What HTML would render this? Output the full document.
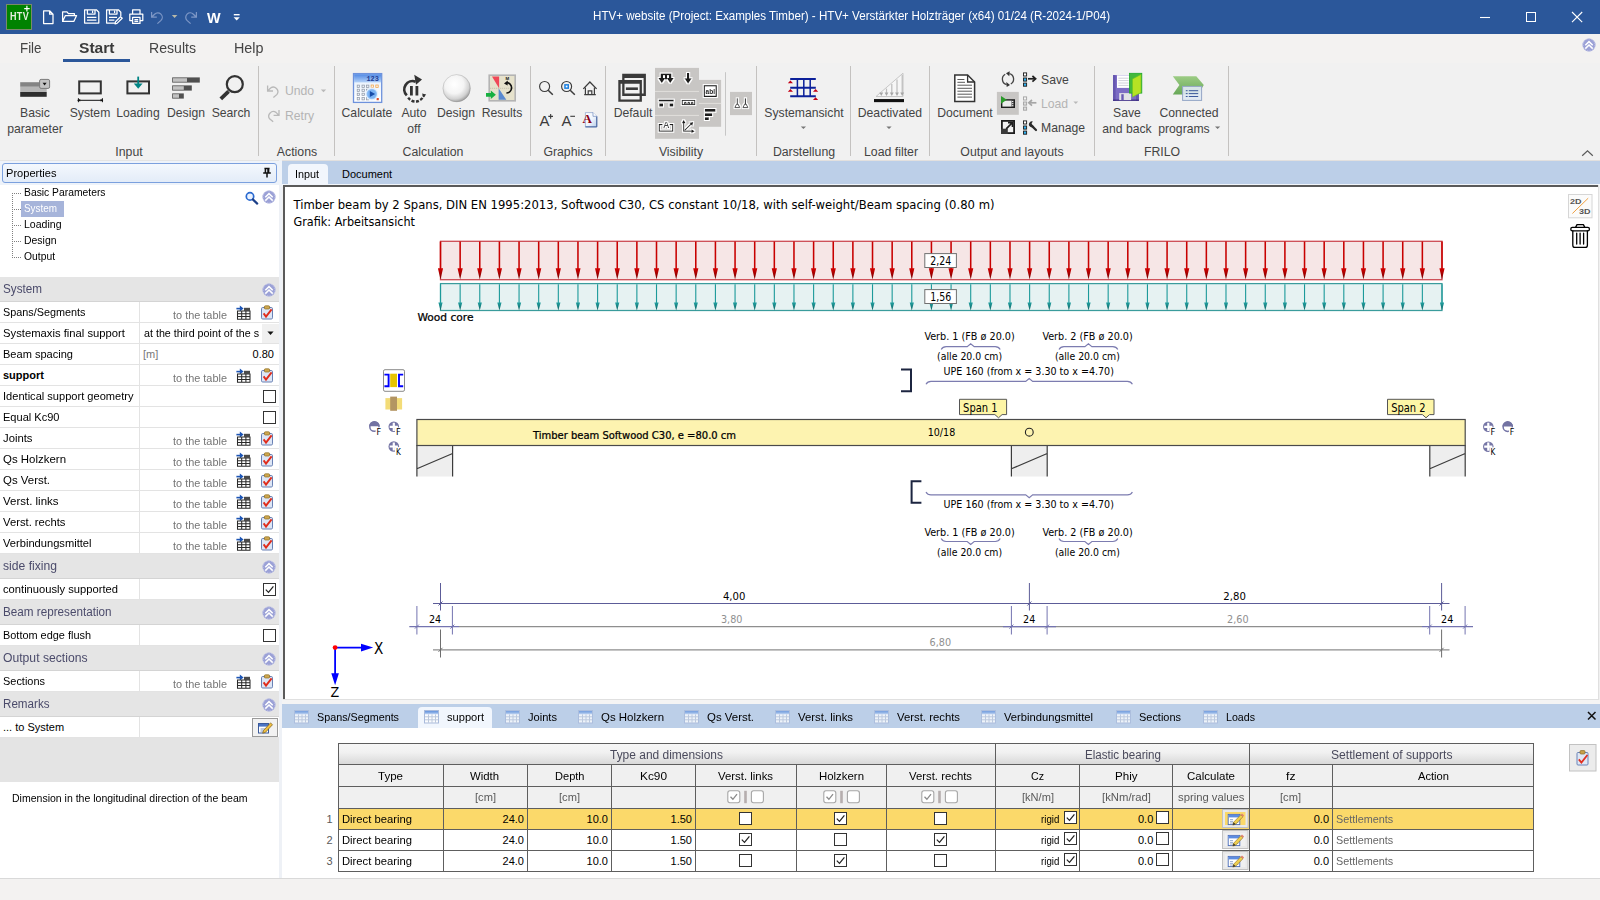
<!DOCTYPE html><html><head><meta charset="utf-8"><title>HTV+</title><style>
*{box-sizing:border-box;margin:0;padding:0}
html,body{width:1600px;height:900px;overflow:hidden;background:#f0f0f0}
body{font-family:"Liberation Sans",sans-serif;font-size:12px;color:#000;position:relative}
.abs{position:absolute}
.t{position:absolute;white-space:nowrap;line-height:1}
svg{position:absolute;overflow:visible}
#title{left:0;top:0;width:1600px;height:33.5px;background:#2b579a}
#menu{left:0;top:33.5px;width:1600px;height:29.5px;background:#f3f2f1}
#ribbon{left:0;top:63px;width:1600px;height:98px;background:#f1f1f1}
.sep{position:absolute;top:66px;width:1px;height:89.8px;background:#c4c2c0}
#left{left:0;top:160px;width:279px;height:718px;background:#e4e4e4}
.hdr{position:absolute;left:0;width:279px;height:25px;background:#e5e5e5;border-bottom:1px solid #d4d4d4}
.row{position:absolute;left:0;width:279px;height:21px;background:#fff;border-bottom:1px solid #e3e3e3}
.row i{position:absolute;left:139px;top:0;width:1px;height:20px;background:#e3e3e3}
.cb{position:absolute;width:13px;height:13px;border:1px solid #333;background:#fff}
</style></head><body>
<div id="title" class="abs"></div>
<div class="abs" style="left:6px;top:4px;width:26px;height:26px;background:#008200;border:1px solid #7a8a6a"></div>
<div class="t" style="left:9.6px;top:11.2px;font-size:10.5px;font-weight:bold;color:#e8f0e0;transform:scaleX(.86);transform-origin:0 0;letter-spacing:.4px">HTV</div>
<svg width="10" height="10" viewBox="0 0 10 10" style="left:22px;top:4px;"><path d="M4.9 1.8V7.4M2.2 4.6H7.7" stroke="#fff" stroke-width="1.2"/></svg>
<svg width="16" height="18" viewBox="0 0 16 18" style="left:40px;top:8px;"><path d="M3.6 2.8H9.6L13 6.2V15.6H3.6Z M9.6 2.8V6.2H13" stroke="#fff" stroke-width="1.25" fill="none" stroke-linejoin="round"/></svg>
<svg width="20" height="18" viewBox="0 0 20 18" style="left:60px;top:8px;"><path d="M2.6 13.4V3.8H7L8.4 5.6H14.4V7.6 M2.6 13.4L5.4 7.6H16.6L13.8 13.4Z" stroke="#fff" stroke-width="1.25" fill="none" stroke-linejoin="round"/></svg>
<svg width="20" height="18" viewBox="0 0 20 18" style="left:82px;top:7px;"><path d="M2.6 2.8H14.4L16.8 5.2V16H2.6Z M5.4 2.8V7H13V2.8 M10.6 3.8V6 M5 10.4H14.4 M5 13.2H14.4" stroke="#fff" stroke-width="1.25" fill="none" stroke-linejoin="round"/></svg>
<svg width="20" height="18" viewBox="0 0 20 18" style="left:104px;top:7px;"><path d="M11 16H2.6V2.8H14.4L16.8 5.2V9 M5.4 2.8V7H13V2.8 M10.6 3.8V6 M5 10.4H13 M5 13.2H10.4" stroke="#fff" stroke-width="1.25" fill="none" stroke-linejoin="round"/><path d="M16.6 9.6L18.2 11.2L13 16.4L11 16.9L11.5 14.8Z" stroke="#fff" stroke-width="1.25" fill="none" stroke-linejoin="round"/></svg>
<svg width="20" height="18" viewBox="0 0 20 18" style="left:127px;top:7px;"><path d="M5.6 7V2.8H13V7 M5.6 13.6H2.8V7H15.8V13.6H13 M5.6 10.4H13V16.4H5.6Z M7.4 12.6H11.2 M7.4 14.4H11.2" stroke="#fff" stroke-width="1.25" fill="none" stroke-linejoin="round"/></svg>
<svg width="18" height="16" viewBox="0 0 18 16" style="left:149px;top:9px;"><path d="M2.6 3V8.2H7.8 M2.8 8L5.6 5.2A4.4 4.4 0 0 1 12 11.4L8.4 14.6" stroke="#7d97c6" stroke-width="1.25" fill="none"/></svg>
<svg width="8" height="5" viewBox="0 0 8 5" style="left:171px;top:14px;"><path d="M0.8 1H6.4L3.6 4Z" fill="#b9b9a8"/></svg>
<svg width="18" height="16" viewBox="0 0 18 16" style="left:181px;top:9px;"><path d="M15.4 3V8.2H10.2 M15.2 8L12.4 5.2A4.4 4.4 0 0 0 6 11.4L9.6 14.6" stroke="#7d97c6" stroke-width="1.25" fill="none"/></svg>
<div class="t" style="left:206.8px;top:9.6px;font-size:15.5px;font-weight:bold;color:#fff;transform:scaleX(.93);transform-origin:0 0">W</div>
<svg width="10" height="9" viewBox="0 0 10 9" style="left:232px;top:13px;"><path d="M1.8 1.7H7.6" stroke="#fff" stroke-width="1.4"/><path d="M1.6 4.2H7.8L4.7 7.4Z" fill="#fff"/></svg>
<svg width="14" height="14" viewBox="0 0 14 14" style="left:1478px;top:10px;"><path d="M2 7.5H12" stroke="#fff" stroke-width="1.1"/></svg>
<svg width="14" height="14" viewBox="0 0 14 14" style="left:1524px;top:10px;"><rect x="2.5" y="2.5" width="9" height="9" stroke="#fff" stroke-width="1" fill="none"/></svg>
<svg width="14" height="14" viewBox="0 0 14 14" style="left:1570px;top:10px;"><path d="M2 2L12.2 12.2M12.2 2L2 12.2" stroke="#fff" stroke-width="1.1"/></svg>
<div class="t " style="left:593.00px;top:10.34px;font-size:12px;color:#fff;transform:scaleX(0.9666);transform-origin:0 0;">HTV+ website (Project: Examples Timber) - HTV+ Verstärkter Holzträger (x64) 01/24 (R-2024-1/P04)</div>
<div id="menu" class="abs"></div>
<div class="t " style="left:20.00px;top:40.95px;font-size:14px;color:#444;transform:scaleX(0.9531);transform-origin:0 0;">File</div>
<div class="t " style="left:79.00px;top:40.95px;font-size:14px;color:#3a3a3a;font-weight:bold;transform:scaleX(1.1130);transform-origin:0 0;">Start</div>
<div class="t " style="left:149.00px;top:40.95px;font-size:14px;color:#444;transform:scaleX(1.0068);transform-origin:0 0;">Results</div>
<div class="t " style="left:234.00px;top:40.95px;font-size:14px;color:#444;transform:scaleX(1.0245);transform-origin:0 0;">Help</div>
<div class="abs" style="left:63px;top:59px;width:67px;height:3px;background:#2b579a"></div>
<div id="ribbon" class="abs"></div>
<div class="sep" style="left:258px"></div>
<div class="sep" style="left:334px"></div>
<div class="sep" style="left:530px"></div>
<div class="sep" style="left:605px"></div>
<div class="sep" style="left:756px"></div>
<div class="sep" style="left:850px"></div>
<div class="sep" style="left:929px"></div>
<div class="sep" style="left:1094px"></div>
<div class="sep" style="left:1228px"></div>
<div class="t " style="left:115.32px;top:145.89px;font-size:12.3px;color:#444;">Input</div>
<div class="t " style="left:276.83px;top:145.89px;font-size:12.3px;color:#444;">Actions</div>
<div class="t " style="left:402.57px;top:145.89px;font-size:12.3px;color:#444;">Calculation</div>
<div class="t " style="left:543.39px;top:145.89px;font-size:12.3px;color:#444;">Graphics</div>
<div class="t " style="left:658.90px;top:145.89px;font-size:12.3px;color:#444;">Visibility</div>
<div class="t " style="left:772.89px;top:145.89px;font-size:12.3px;color:#444;">Darstellung</div>
<div class="t " style="left:863.99px;top:145.89px;font-size:12.3px;color:#444;">Load filter</div>
<div class="t " style="left:960.37px;top:145.89px;font-size:12.3px;color:#444;">Output and layouts</div>
<div class="t " style="left:1143.89px;top:145.89px;font-size:12.3px;color:#444;">FRILO</div>
<div class="t " style="left:20.08px;top:107.07px;font-size:12.2px;color:#444;">Basic</div>
<div class="t " style="left:69.66px;top:107.07px;font-size:12.2px;color:#444;">System</div>
<div class="t " style="left:116.29px;top:107.07px;font-size:12.2px;color:#444;">Loading</div>
<div class="t " style="left:167.01px;top:107.07px;font-size:12.2px;color:#444;">Design</div>
<div class="t " style="left:211.67px;top:107.07px;font-size:12.2px;color:#444;">Search</div>
<div class="t " style="left:341.57px;top:107.07px;font-size:12.2px;color:#444;">Calculate</div>
<div class="t " style="left:401.45px;top:107.07px;font-size:12.2px;color:#444;">Auto</div>
<div class="t " style="left:437.01px;top:107.07px;font-size:12.2px;color:#444;">Design</div>
<div class="t " style="left:481.66px;top:107.07px;font-size:12.2px;color:#444;">Results</div>
<div class="t " style="left:613.67px;top:107.07px;font-size:12.2px;color:#444;">Default</div>
<div class="t " style="left:764.33px;top:107.07px;font-size:12.2px;color:#444;">Systemansicht</div>
<div class="t " style="left:857.79px;top:107.07px;font-size:12.2px;color:#444;">Deactivated</div>
<div class="t " style="left:937.20px;top:107.07px;font-size:12.2px;color:#444;">Document</div>
<div class="t " style="left:1113.10px;top:107.07px;font-size:12.2px;color:#444;">Save</div>
<div class="t " style="left:1159.49px;top:107.07px;font-size:12.2px;color:#444;">Connected</div>
<div class="t " style="left:7.20px;top:123.07px;font-size:12.2px;color:#444;">parameter</div>
<div class="t " style="left:407.33px;top:123.07px;font-size:12.2px;color:#444;">off</div>
<div class="t " style="left:1102.24px;top:123.07px;font-size:12.2px;color:#444;">and back</div>
<div class="t " style="left:1158.24px;top:123.07px;font-size:12.2px;color:#444;">programs</div>
<div class="t " style="left:285.00px;top:85.47px;font-size:12.2px;color:#b4b4b4;">Undo</div>
<div class="t " style="left:285.00px;top:110.07px;font-size:12.2px;color:#b4b4b4;">Retry</div>
<div class="t " style="left:1041.00px;top:74.07px;font-size:12.2px;color:#444;">Save</div>
<div class="t " style="left:1041.00px;top:98.07px;font-size:12.2px;color:#b4b4b4;">Load</div>
<div class="t " style="left:1041.00px;top:122.17px;font-size:12.2px;color:#444;">Manage</div>
<svg width="1600" height="170" viewBox="0 0 1600 170" style="left:0;top:0">
<defs><radialGradient id="ball" cx="0.42" cy="0.36" r="0.68"><stop offset="0" stop-color="#ffffff"/><stop offset="0.5" stop-color="#f4f4f4"/><stop offset="0.78" stop-color="#d2d2d2"/><stop offset="1" stop-color="#8e8e8e"/></radialGradient><linearGradient id="calh" x1="0" y1="0" x2="0" y2="1"><stop offset="0" stop-color="#5088e4"/><stop offset="1" stop-color="#b4d2f8"/></linearGradient><linearGradient id="calb" x1="0" y1="0" x2="0" y2="1"><stop offset="0" stop-color="#e4effc"/><stop offset="1" stop-color="#ffffff"/></linearGradient><radialGradient id="play" cx="0.4" cy="0.35" r="0.7"><stop offset="0" stop-color="#7fb6f8"/><stop offset="1" stop-color="#1c5fc8"/></radialGradient><linearGradient id="flop" x1="0" y1="0" x2="1" y2="1"><stop offset="0" stop-color="#7a5ad0"/><stop offset="1" stop-color="#4a3aa0"/></linearGradient><linearGradient id="door" x1="0" y1="0" x2="1" y2="0"><stop offset="0" stop-color="#b8e020"/><stop offset="1" stop-color="#30b030"/></linearGradient><linearGradient id="gban" x1="0" y1="0" x2="0" y2="1"><stop offset="0" stop-color="#9ccc84"/><stop offset="1" stop-color="#68a858"/></linearGradient></defs>
<rect x="20.2" y="82.2" width="19.5" height="4.6" fill="#848484"/><rect x="20.2" y="86.8" width="26.5" height="5.2" fill="#b6b6b6"/><rect x="20.2" y="92" width="26.5" height="4.8" fill="#2e2e2e"/>
<rect x="39.6" y="79.4" width="10" height="9" rx="1.5" fill="#c4c4c4" stroke="#7a7a7a" stroke-width="1"/><path d="M42.6 82.8H46.6L44.6 85.4Z" fill="#111"/>
<rect x="79.2" y="81.4" width="21.6" height="12" fill="none" stroke="#333" stroke-width="2"/><path d="M77.6 100.3H103M78.4 98.2V102.2M102.4 98.2V102.2" stroke="#111" stroke-width="1"/><path d="M77.4 100.3L80.2 99V101.6ZM103.4 100.3L100.6 99V101.6Z" fill="#111"/>
<rect x="127.4" y="81.4" width="21.6" height="12" fill="none" stroke="#333" stroke-width="2"/><path d="M138.2 76.6V86" stroke="#008484" stroke-width="1.8"/><path d="M133.8 83.6H142.6L138.2 88.8Z" fill="#008484"/>
<rect x="172.2" y="77.4" width="27.6" height="5.2" fill="#505050"/><rect x="173" y="78.2" width="14" height="3.6" fill="#c2c2c2"/><rect x="172.2" y="85.4" width="19.6" height="5.2" fill="#505050"/><rect x="173" y="86.2" width="10.8" height="3.6" fill="#c2c2c2"/><rect x="172.2" y="93.4" width="11.6" height="5.2" fill="#505050"/><rect x="173" y="94.2" width="6" height="3.6" fill="#c2c2c2"/>
<circle cx="234.8" cy="84.2" r="8" fill="none" stroke="#333" stroke-width="2.2"/><path d="M228.6 91.4L220.8 98.8" stroke="#333" stroke-width="3.8"/>
<path d="M267.6 85.6V91H273 M267.8 90.8L270.6 88A4.6 4.6 0 0 1 277 94.4L273.4 97.4" fill="none" stroke="#b9b9b9" stroke-width="1.3"/>
<path d="M279 110V115.4H273.6 M278.8 115.2L276 112.4A4.6 4.6 0 0 0 269.6 118.8L273.2 121.8" fill="none" stroke="#b9b9b9" stroke-width="1.3"/>
<path d="M320.8 89.6H326.2L323.5 92.2Z" fill="#b9b9b9"/>
<rect x="353.5" y="73.6" width="28.2" height="28.8" fill="url(#calb)" stroke="#6e92dc" stroke-width="1.3"/><rect x="354.1" y="74.2" width="27" height="8.2" fill="url(#calh)"/>
<text x="366.4" y="81" font-size="6.6" font-weight="bold" fill="#1c3a90" font-family="Liberation Mono,monospace" textLength="12.4" lengthAdjust="spacingAndGlyphs">123</text>
<rect x="357.2" y="85.1" width="2.4" height="2.4" fill="#eceff4" stroke="#8c96a6" stroke-width="0.7"/><rect x="362.0" y="85.1" width="2.4" height="2.4" fill="#eceff4" stroke="#8c96a6" stroke-width="0.7"/><rect x="366.5" y="85.1" width="2.4" height="2.4" fill="#eceff4" stroke="#8c96a6" stroke-width="0.7"/><rect x="357.2" y="89.2" width="2.4" height="2.4" fill="#eceff4" stroke="#8c96a6" stroke-width="0.7"/><rect x="362.0" y="89.2" width="2.4" height="2.4" fill="#eceff4" stroke="#8c96a6" stroke-width="0.7"/><rect x="366.5" y="89.2" width="2.4" height="2.4" fill="#eceff4" stroke="#8c96a6" stroke-width="0.7"/><rect x="357.2" y="93.2" width="2.4" height="2.4" fill="#eceff4" stroke="#8c96a6" stroke-width="0.7"/><rect x="362.0" y="93.2" width="2.4" height="2.4" fill="#eceff4" stroke="#8c96a6" stroke-width="0.7"/><rect x="366.5" y="93.2" width="2.4" height="2.4" fill="#eceff4" stroke="#8c96a6" stroke-width="0.7"/><rect x="357.2" y="97.5" width="2.4" height="2.4" fill="#eceff4" stroke="#8c96a6" stroke-width="0.7"/><rect x="362.0" y="97.5" width="2.4" height="2.4" fill="#eceff4" stroke="#8c96a6" stroke-width="0.7"/><rect x="366.5" y="97.5" width="2.4" height="2.4" fill="#eceff4" stroke="#8c96a6" stroke-width="0.7"/><rect x="371.1" y="85" width="2.4" height="2.4" fill="#fdf0e0" stroke="#f0a040" stroke-width="0.7"/><rect x="375.8" y="85" width="2.4" height="2.4" fill="#fdf0e0" stroke="#f0a040" stroke-width="0.7"/><rect x="376.6" y="98" width="2.2" height="2.2" fill="#e05030"/>
<circle cx="371.8" cy="94" r="5.9" fill="#a4ccf8" stroke="#e6f2ff" stroke-width="1.1"/><circle cx="371.8" cy="94" r="4.6" fill="#7db4f4"/><path d="M369.8 91L375.2 94L369.8 97Z" fill="#184ca8"/>
<path d="M406.8 95.4A8.3 8.3 0 0 1 415.6 81.7" fill="none" stroke="#333" stroke-width="2.7"/><path d="M414.2 74.7L422 79.4L416 84.8Z" fill="#333"/>
<path d="M411.4 86V95.5M416.9 86V95.5" stroke="#333" stroke-width="2.8"/>
<path d="M408.2 97.6A8.6 8.6 0 0 0 423.6 95.6" fill="none" stroke="#333" stroke-width="2.4" stroke-dasharray="3 1.5"/><path d="M422 93.6L426.2 94.6L423.6 97.6Z" fill="#333"/>
<circle cx="456.6" cy="88.2" r="13.9" fill="url(#ball)"/><circle cx="456.6" cy="88.2" r="13.6" fill="none" stroke="#8a8a8a" stroke-opacity="0.45" stroke-width="0.7"/>
<rect x="489.2" y="75.2" width="26" height="25.6" fill="#e6e2cc" stroke="#b4b4b4" stroke-width="1.6"/>
<path d="M492 76.5H499.1V88.3Z" fill="#f04858"/><path d="M498.6 88.3L506.3 99.8H498.6Z" fill="#5a8ad0"/><path d="M490.2 88.3H514.4" stroke="#b0ac98" stroke-width="0.7" stroke-dasharray="1 1"/>
<path d="M506.4 82.6A5.2 5.2 0 0 1 506.4 93" fill="none" stroke="#111" stroke-width="1.6"/><path d="M504 83.6L507.8 80.6L507.6 85.4Z" fill="#111"/>
<text x="505.4" y="80" font-size="4.4" font-weight="bold" fill="#111" font-family="Liberation Sans,sans-serif">M</text>
<path d="M486 92.9H490.8V90.6L495.9 94.8L490.8 99V96.7H486Z" fill="#18b040"/>
<circle cx="544.6" cy="86.5" r="5" fill="none" stroke="#3c3c3c" stroke-width="1.15"/><path d="M548.2 90.2L552.8 94.8" stroke="#3c3c3c" stroke-width="1.5"/>
<circle cx="566.6" cy="86.5" r="5" fill="none" stroke="#3c3c3c" stroke-width="1.15"/><path d="M570.2 90.2L574.8 94.8" stroke="#3c3c3c" stroke-width="1.5"/><rect x="564.2" y="84.1" width="4.8" height="4.8" fill="#1c80e0"/><rect x="565.7" y="85.6" width="1.8" height="1.8" fill="#fff"/>
<path d="M583.3 88.9L589.9 82L596.6 88.9" fill="none" stroke="#3c3c3c" stroke-width="1.3"/><path d="M585.4 87.4V94.6M594.4 87.4V94.6M588.2 94.6V90.8H591.8V94.6M584.2 94.6H595.8" fill="none" stroke="#3c3c3c" stroke-width="1.2"/>
<text x="539.4" y="126" font-size="15" fill="#3c3c3c" font-family="Liberation Sans,sans-serif">A</text><path d="M548.3 116.4H553M550.65 114V118.8" stroke="#3c3c3c" stroke-width="1.1"/>
<text x="561.4" y="126" font-size="15" fill="#3c3c3c" font-family="Liberation Sans,sans-serif">A</text><path d="M570.3 116.3H575" stroke="#3c3c3c" stroke-width="1.1"/>
<defs><linearGradient id="pg" x1="0" y1="0" x2="1" y2="1"><stop offset="0" stop-color="#ffffff"/><stop offset="0.55" stop-color="#eef4fc"/><stop offset="1" stop-color="#b8cce8"/></linearGradient></defs>
<path d="M585.4 112.6H593L596.7 116.3V126.8H585.4Z" fill="url(#pg)" stroke="#8aa0cc" stroke-width="0.7"/><path d="M585.4 126.9H596.8V116.4" fill="none" stroke="#3c5c9c" stroke-width="1"/><path d="M593 112.6V116.3H596.7" fill="#fff" stroke="#6c86ba" stroke-width="0.7"/>
<text x="582.6" y="123.2" font-size="13" font-weight="bold" fill="#8c0014" font-family="Liberation Serif,serif">A</text>
<path d="M622.2 73.8H645.9V95.9H622.2Z M624.5 78.1V93.6H643.6V78.1Z" fill="#3a3a3a" fill-rule="evenodd"/>
<path d="M618.3 79.9H641.9V101.8H618.3Z M620.6 83.7V99.5H639.6V83.7Z" fill="#3a3a3a" fill-rule="evenodd"/>
<rect x="625.9" y="87.4" width="12" height="2.6" fill="#3a3a3a"/>
<rect x="655" y="67.9" width="44" height="70.9" fill="#c8c6c4"/><rect x="699" y="79.9" width="22.1" height="46.9" fill="#c8c6c4"/>
<path d="M655 91.4H699M655 115.4H699M699 103.4H721.1" stroke="#e4e2e0" stroke-width="0.9"/>
<filter id="halo" x="-20%" y="-20%" width="140%" height="140%"><feMorphology in="SourceAlpha" operator="dilate" radius="0.8" result="d"/><feFlood flood-color="#fff" result="f"/><feComposite in="f" in2="d" operator="in" result="h"/><feMerge><feMergeNode in="h"/><feMergeNode in="SourceGraphic"/></feMerge></filter>
<g filter="url(#halo)">
<path d="M660.6 73.4H663V78H665.4L661.8 83.2L658.3 78H660.6Z M669 73.4H671.4V78H673.8L670.2 83.2L666.7 78H669Z" fill="#1e1e1e"/><path d="M663 73.4H669V75.2H667V79.4H665V75.2H663Z" fill="#1e1e1e"/>
<path d="M687 73.1H689.2V78.2H691.8L688.1 83.7L684.4 78.2H687Z" fill="#1e1e1e"/>
<rect x="658.7" y="99.6" width="15.1" height="1.9" fill="#1e1e1e"/><rect x="659.2" y="103.4" width="3.8" height="3.2" fill="#1e1e1e"/><rect x="669.5" y="103.4" width="3.8" height="3.2" fill="#1e1e1e"/>
<rect x="682.2" y="100.4" width="12.6" height="4.2" fill="#fff" stroke="#1e1e1e" stroke-width="1"/><path d="M684.6 104.4V102.4H686V104.4M688 104.4V102.4H689.4V104.4M691.4 104.4V102.4H692.8V104.4" stroke="#1e1e1e" stroke-width="0.9" fill="none"/>
<path d="M662.6 124.6H659.3V131.1H672.7V124.6H669.6" fill="none" stroke="#1e1e1e" stroke-width="1.2"/><text x="663" y="128.2" font-size="9" font-weight="bold" fill="#444" font-family="Liberation Sans,sans-serif">A</text>
<path d="M683.7 122V131.2H692.6" fill="none" stroke="#1e1e1e" stroke-width="1.2"/><path d="M683.7 119.8L681.7 123.2H685.7ZM694.8 131.2L691.4 129.2V133.2Z" fill="#1e1e1e"/><path d="M684.6 130.4L691.8 123.4" stroke="#1e1e1e" stroke-width="1.2"/><path d="M693.2 122L692.4 126L689.2 122.8Z" fill="#1e1e1e"/>
<rect x="704.3" y="85.7" width="12" height="10.7" fill="#fff" stroke="#1e1e1e" stroke-width="1.2"/><text x="705.6" y="93.8" font-size="6.8" font-weight="bold" fill="#1e1e1e" font-family="Liberation Sans,sans-serif" textLength="9.4" lengthAdjust="spacingAndGlyphs">abl</text>
<rect x="704.9" y="109" width="10.6" height="2.8" fill="#1e1e1e"/><rect x="704.9" y="113.2" width="7.3" height="2.8" fill="#1e1e1e"/><rect x="704.9" y="117.2" width="4" height="2.8" fill="#1e1e1e"/>
</g>
<path d="M725.5 72.2V135.7" stroke="#c6c6c6" stroke-width="1"/>
<rect x="730" y="91.9" width="22" height="23.2" fill="#c8c6c4"/>
<g filter="url(#halo)"><path d="M737.3 98.2V104.6M745.4 98.2V104.6" stroke="#1e1e1e" stroke-width="1.1"/><path d="M736.4 104.2H738.2L739.8 107.6H734.8ZM744.5 104.2H746.3L747.9 107.6H742.9Z" fill="#fff" stroke="#1e1e1e" stroke-width="0.9"/></g>
<path d="M790.2 79.1H815.8M790.2 87.8H815.8M790.2 96.2H815.8" stroke="#0c209a" stroke-width="2" fill="none"/><path d="M797.4 79.1V96.2M803.8 79.1V96.2M810.2 79.1V96.2" stroke="#0c209a" stroke-width="1.5" fill="none"/>
<path d="M790.4 80.4L787.8 83.2H793ZM790.4 88.9L787.8 91.7H793ZM815.6 88.9L813 91.7H818.2ZM815.6 97.3L813 100.1H818.2Z" fill="#c40014"/>
<path d="M800.8 126.4H806L803.4 129Z" fill="#767676"/><path d="M886.4 126.4H891.6L889 129Z" fill="#767676"/>
<path d="M876 96.5L903 73.2V96.5Z" fill="#f6f6f6" stroke="#c2c2c2" stroke-width="0.9"/>
<path d="M881.3 93.1V93.4" stroke="#bcbcbc" stroke-width="1.2"/><path d="M879.4 92.6H883.1999999999999L881.3 96Z" fill="#a6a6a6"/><path d="M886.5 88.6V93.4" stroke="#bcbcbc" stroke-width="1.2"/><path d="M884.6 92.6H888.4L886.5 96Z" fill="#a6a6a6"/><path d="M891.8 84.1V93.4" stroke="#bcbcbc" stroke-width="1.2"/><path d="M889.9 92.6H893.6999999999999L891.8 96Z" fill="#a6a6a6"/><path d="M897 79.6V93.4" stroke="#bcbcbc" stroke-width="1.2"/><path d="M895.1 92.6H898.9L897 96Z" fill="#a6a6a6"/><path d="M902.2 75.1V93.4" stroke="#bcbcbc" stroke-width="1.2"/><path d="M900.3000000000001 92.6H904.1L902.2 96Z" fill="#a6a6a6"/>
<path d="M874 100.6H904" stroke="#111" stroke-width="3.1"/>
<path d="M954.8 75H967.6L974.6 82V101.4H954.8Z" fill="#fff" stroke="#333" stroke-width="1.5" stroke-linejoin="miter"/><path d="M967.6 75V82H974.6" fill="none" stroke="#333" stroke-width="1.3"/><path d="M957.4 79.5H964.4M957.4 82.3H965M957.4 85.2H972M957.4 88.3H972M957.4 91.2H972M957.4 94.2H972M957.4 97.1H972" stroke="#505050" stroke-width="0.95"/>
<path d="M1010.8 83.95A5.6 5.6 0 0 0 1009.45 73.69" fill="none" stroke="#444" stroke-width="1.3"/><path d="M1006 73.2L1009.7 71.2L1009.3 76.2Z" fill="#333"/><path d="M1005.2 74.25A5.6 5.6 0 0 0 1006.55 84.51" fill="none" stroke="#444" stroke-width="1.3"/><path d="M1010 85L1006.3 82L1006.7 87Z" fill="#333"/>
<rect x="996.9" y="91.9" width="21.9" height="22.9" fill="#c8c6c4"/><rect x="1001.7" y="99.9" width="12.6" height="7.4" fill="#ececec" stroke="#1e1e1e" stroke-width="1.4"/><rect x="1011.6" y="100.4" width="2.2" height="6.4" fill="#1e1e1e"/><rect x="1012.1" y="101" width="1.2" height="1.2" fill="#fff"/><rect x="1012.1" y="103.1" width="1.2" height="1.2" fill="#fff"/><rect x="1012.1" y="105.1" width="1.2" height="1.2" fill="#fff"/><path d="M1001 95.9L1006.8 99.8L1001 103.8Z" fill="#2a9a2a"/>
<rect x="1001.9" y="120.9" width="12.2" height="12.2" fill="none" stroke="#1e1e1e" stroke-width="1.8"/><rect x="1001" y="128.7" width="6.8" height="5.3" fill="#3a3a3a"/><path d="M1006.2 128.8L1012 123M1008 122.6H1012.5V127.1" fill="none" stroke="#1e1e1e" stroke-width="1.7"/>
<rect x="1023.5" y="72.9" width="3.1" height="3.1" fill="#fff" stroke="#222" stroke-width="0.95"/><rect x="1023.5" y="78.0" width="3.1" height="3.1" fill="#30b4f4" stroke="#222" stroke-width="0.95"/><rect x="1023.5" y="83.10000000000001" width="3.1" height="3.1" fill="#30b4f4" stroke="#222" stroke-width="0.95"/>
<path d="M1028 78.8H1035.2" fill="none" stroke="#222" stroke-width="1.7"/><path d="M1032.4 76L1035.6 78.8L1032.4 81.6" fill="none" stroke="#222" stroke-width="1.7"/>
<rect x="1023.5" y="96.9" width="3.1" height="3.1" fill="#f4f4f4" stroke="#a6a6a6" stroke-width="0.95"/><rect x="1023.5" y="102.0" width="3.1" height="3.1" fill="#dcdcdc" stroke="#a6a6a6" stroke-width="0.95"/><rect x="1023.5" y="107.10000000000001" width="3.1" height="3.1" fill="#dcdcdc" stroke="#a6a6a6" stroke-width="0.95"/>
<path d="M1036.4 102.8H1029.2" fill="none" stroke="#a6a6a6" stroke-width="1.7"/><path d="M1032 100L1028.8 102.8L1032 105.6" fill="none" stroke="#a6a6a6" stroke-width="1.7"/>
<rect x="1023.5" y="120.9" width="3.1" height="3.1" fill="#fff" stroke="#222" stroke-width="0.95"/><rect x="1023.5" y="126.0" width="3.1" height="3.1" fill="#30b4f4" stroke="#222" stroke-width="0.95"/><rect x="1023.5" y="131.1" width="3.1" height="3.1" fill="#30b4f4" stroke="#222" stroke-width="0.95"/>
<path d="M1031.6 125.6L1036 130" stroke="#2a2a2a" stroke-width="2.2" stroke-linecap="round"/><path d="M1032.9 121.4A3 3 0 1 0 1034.2 126.2L1032.4 125.2L1031.6 123.2Z" fill="#2a2a2a"/>
<path d="M1073.4 101.6H1078.2L1075.8 104Z" fill="#b9b9b9"/>
<rect x="1113" y="75.1" width="25.9" height="25.6" fill="#7c6cc4"/><rect x="1113" y="75.1" width="2.6" height="25.6" fill="#6656b0"/><rect x="1136" y="75.1" width="2.9" height="25.6" fill="#6656b0"/><rect x="1113" y="99.6" width="25.9" height="1.2" fill="#3a2a80"/>
<rect x="1117" y="75.3" width="12.8" height="12.6" fill="#fff"/><path d="M1118.4 78.2H1128.6M1118.4 80.6H1128.6M1118.4 83H1128.6M1118.4 85.4H1128.6" stroke="#c4c4d0" stroke-width="0.8"/>
<rect x="1119.2" y="93.1" width="11.9" height="7" fill="#e2e2e6"/><rect x="1121.3" y="94.2" width="2.4" height="5.9" fill="#6a5ab4"/>
<rect x="1129.4" y="73.3" width="12.4" height="19.8" fill="#44b83c" stroke="#1ea828" stroke-width="0.8"/><path d="M1132.5 79L1141 74.4V92.6L1132.5 96.9Z" fill="#b6e224" stroke="#6cc420" stroke-width="0.6"/>
<path d="M1172.8 76.2H1196.3L1203.8 85.1L1198.1 94.5H1172.8L1179.4 85.1Z" fill="url(#gban)"/><rect x="1182.6" y="86.4" width="19" height="14" fill="#dfe8f2" fill-opacity="0.93" stroke="#94a6c6" stroke-width="1"/><path d="M1188.8 90.7H1198.2M1188.8 93.6H1198.2M1188.8 96.5H1198.2" stroke="#3c5a9c" stroke-width="1"/><path d="M1185.8 90.7H1187.6M1185.8 93.6H1187.6M1185.8 96.5H1187.6" stroke="#3c5a9c" stroke-width="1"/>
<path d="M1215 126.4H1220.2L1217.6 129Z" fill="#767676"/>
<path d="M1582.2 155.8L1587.5 150.9L1592.8 155.8" fill="none" stroke="#5a5a5a" stroke-width="1.2"/>
</svg>
<svg width="16" height="16" viewBox="0 0 16 16" style="left:1581.4px;top:37.2px;"><circle cx="8" cy="8" r="6.5" fill="#9ba1d6"/><circle cx="8" cy="8" r="6.1" fill="none" stroke="#c9ccec" stroke-width="1" stroke-dasharray="1.4 1.1"/><path d="M4.3 8.2L8 4.6L11.7 8.2M4.3 11.6L8 8L11.7 11.6" fill="none" stroke="#fff" stroke-width="1.5"/></svg>
<div class="abs" style="left:0;top:160px;width:1600px;height:1px;background:#e2e0de"></div>
<div class="abs" style="left:0;top:161px;width:1600px;height:23px;background:#bccfe8"></div>
<div class="abs" style="left:0;top:184px;width:1600px;height:2px;background:#f2f6fb"></div>
<div id="left" class="abs"></div>
<div class="abs" style="left:279px;top:160px;width:3px;height:718px;background:#eef1f6"></div>
<div class="abs" style="left:0;top:161px;width:282px;height:24px;background:#eef3fa"></div>
<div class="abs" style="left:2px;top:163px;width:275px;height:20px;border:1px solid #7ba0de;border-radius:3px;background:linear-gradient(#f4f8fd,#e3ecf8)"></div>
<div class="t " style="left:6.00px;top:167.69px;font-size:11px;transform:scaleX(1.0073);transform-origin:0 0;">Properties</div>
<div class="abs" style="left:0;top:185px;width:279px;height:92px;background:#fff"></div>
<div class="abs" style="left:21px;top:201px;width:43px;height:16px;background:#a6b4da"></div>
<div class="t " style="left:24.00px;top:186.69px;font-size:11px;transform:scaleX(0.9389);transform-origin:0 0;">Basic Parameters</div>
<div class="t " style="left:24.00px;top:202.69px;font-size:11px;color:#fff;transform:scaleX(0.8998);transform-origin:0 0;">System</div>
<div class="t " style="left:24.00px;top:218.69px;font-size:11px;transform:scaleX(0.9578);transform-origin:0 0;">Loading</div>
<div class="t " style="left:24.00px;top:234.69px;font-size:11px;transform:scaleX(0.9492);transform-origin:0 0;">Design</div>
<div class="t " style="left:24.00px;top:250.69px;font-size:11px;transform:scaleX(0.9388);transform-origin:0 0;">Output</div>
<svg width="30" height="100" style="left:0;top:185px"><path d="M12.5 8v65M12 8.5h10M12 24.5h10M12 40.5h10M12 56.5h10M12 72.5h10" stroke="#808080" stroke-width="1" stroke-dasharray="1 1" fill="none" shape-rendering="crispEdges"/></svg>
<div class="hdr" style="top:277px"></div>
<div class="t " style="left:3.00px;top:282.92px;font-size:12.5px;color:#4b4b6b;transform:scaleX(0.9358);transform-origin:0 0;">System</div>
<div class="row" style="top:302px"><i></i></div>
<div class="t " style="left:3.00px;top:307.19px;font-size:11px;transform:scaleX(0.9848);transform-origin:0 0;">Spans/Segments</div>
<div class="t " style="left:173.00px;top:310.19px;font-size:11px;color:#767676;transform:scaleX(0.9921);transform-origin:0 0;">to the table</div>
<div class="row" style="top:323px"><i></i></div>
<div class="t " style="left:3.00px;top:328.19px;font-size:11px;transform:scaleX(1.0233);transform-origin:0 0;">Systemaxis final support</div>
<div class="row" style="top:344px"><i></i></div>
<div class="t " style="left:3.00px;top:349.19px;font-size:11px;transform:scaleX(1.0042);transform-origin:0 0;">Beam spacing</div>
<div class="row" style="top:365px"><i></i></div>
<div class="t " style="left:3.00px;top:370.19px;font-size:11px;font-weight:bold;">support</div>
<div class="t " style="left:173.00px;top:373.19px;font-size:11px;color:#767676;transform:scaleX(0.9921);transform-origin:0 0;">to the table</div>
<div class="row" style="top:386px"><i></i></div>
<div class="t " style="left:3.00px;top:391.19px;font-size:11px;transform:scaleX(1.0067);transform-origin:0 0;">Identical support geometry</div>
<div class="row" style="top:407px"><i></i></div>
<div class="t " style="left:3.00px;top:412.19px;font-size:11px;transform:scaleX(1.0042);transform-origin:0 0;">Equal Kc90</div>
<div class="row" style="top:428px"><i></i></div>
<div class="t " style="left:3.00px;top:433.19px;font-size:11px;transform:scaleX(1.0266);transform-origin:0 0;">Joints</div>
<div class="t " style="left:173.00px;top:436.19px;font-size:11px;color:#767676;transform:scaleX(0.9921);transform-origin:0 0;">to the table</div>
<div class="row" style="top:449px"><i></i></div>
<div class="t " style="left:3.00px;top:454.19px;font-size:11px;transform:scaleX(1.0410);transform-origin:0 0;">Qs Holzkern</div>
<div class="t " style="left:173.00px;top:457.19px;font-size:11px;color:#767676;transform:scaleX(0.9921);transform-origin:0 0;">to the table</div>
<div class="row" style="top:470px"><i></i></div>
<div class="t " style="left:3.00px;top:475.19px;font-size:11px;transform:scaleX(1.0390);transform-origin:0 0;">Qs Verst.</div>
<div class="t " style="left:173.00px;top:478.19px;font-size:11px;color:#767676;transform:scaleX(0.9921);transform-origin:0 0;">to the table</div>
<div class="row" style="top:491px"><i></i></div>
<div class="t " style="left:3.00px;top:496.19px;font-size:11px;transform:scaleX(1.0435);transform-origin:0 0;">Verst. links</div>
<div class="t " style="left:173.00px;top:499.19px;font-size:11px;color:#767676;transform:scaleX(0.9921);transform-origin:0 0;">to the table</div>
<div class="row" style="top:512px"><i></i></div>
<div class="t " style="left:3.00px;top:517.19px;font-size:11px;transform:scaleX(1.0223);transform-origin:0 0;">Verst. rechts</div>
<div class="t " style="left:173.00px;top:520.19px;font-size:11px;color:#767676;transform:scaleX(0.9921);transform-origin:0 0;">to the table</div>
<div class="row" style="top:533px"><i></i></div>
<div class="t " style="left:3.00px;top:538.19px;font-size:11px;transform:scaleX(1.0121);transform-origin:0 0;">Verbindungsmittel</div>
<div class="t " style="left:173.00px;top:541.19px;font-size:11px;color:#767676;transform:scaleX(0.9921);transform-origin:0 0;">to the table</div>
<div class="hdr" style="top:554px"></div>
<div class="t " style="left:3.00px;top:559.92px;font-size:12.5px;color:#4b4b6b;transform:scaleX(0.9715);transform-origin:0 0;">side fixing</div>
<div class="row" style="top:579px"><i></i></div>
<div class="t " style="left:3.00px;top:584.19px;font-size:11px;transform:scaleX(1.0165);transform-origin:0 0;">continuously supported</div>
<div class="hdr" style="top:600px"></div>
<div class="t " style="left:3.00px;top:605.92px;font-size:12.5px;color:#4b4b6b;transform:scaleX(0.9350);transform-origin:0 0;">Beam representation</div>
<div class="row" style="top:625px"><i></i></div>
<div class="t " style="left:3.00px;top:630.19px;font-size:11px;transform:scaleX(0.9925);transform-origin:0 0;">Bottom edge flush</div>
<div class="hdr" style="top:646px"></div>
<div class="t " style="left:3.00px;top:651.92px;font-size:12.5px;color:#4b4b6b;transform:scaleX(0.9729);transform-origin:0 0;">Output sections</div>
<div class="row" style="top:671px"><i></i></div>
<div class="t " style="left:3.00px;top:676.19px;font-size:11px;transform:scaleX(0.9955);transform-origin:0 0;">Sections</div>
<div class="t " style="left:173.00px;top:679.19px;font-size:11px;color:#767676;transform:scaleX(0.9921);transform-origin:0 0;">to the table</div>
<div class="hdr" style="top:692px"></div>
<div class="t " style="left:3.00px;top:697.92px;font-size:12.5px;color:#4b4b6b;transform:scaleX(0.9299);transform-origin:0 0;">Remarks</div>
<div class="row" style="top:717px"><i></i></div>
<div class="t " style="left:3.00px;top:722.19px;font-size:11px;">... to System</div>
<div class="t " style="left:144.00px;top:328.19px;font-size:11px;transform:scaleX(0.9744);transform-origin:0 0;">at the third point of the s</div>
<div class="abs" style="left:259px;top:324px;width:4px;height:18px;background:#fff"></div>
<div class="t " style="left:143.00px;top:349.19px;font-size:11px;color:#777;">[m]</div>
<div class="t " style="left:252.59px;top:349.19px;font-size:11px;">0.80</div>
<svg width="12" height="12" viewBox="0 0 12 12" style="left:261px;top:167px;"><path d="M3.4 1.6H8.6M4.4 1.6V5.6M7.6 1.6V5.6M7 1.6V5.6M2.2 6H9.8M6 6V10.4" stroke="#111" stroke-width="1.5" fill="none"/></svg>
<svg width="16" height="16" viewBox="0 0 16 16" style="left:244px;top:190px;"><circle cx="6" cy="6.4" r="3.7" fill="#eaf2ff" stroke="#2a6ad0" stroke-width="1.7"/><path d="M8.8 9.4L13.2 13.6" stroke="#1c3f88" stroke-width="2.2" stroke-linecap="round"/></svg>
<svg width="16" height="16" viewBox="0 0 16 16" style="left:260.7px;top:189.4px;"><circle cx="8" cy="8" r="6.5" fill="#9ba1d6"/><circle cx="8" cy="8" r="6.1" fill="none" stroke="#c9ccec" stroke-width="1" stroke-dasharray="1.4 1.1"/><path d="M4.3 8.2L8 4.6L11.7 8.2M4.3 11.6L8 8L11.7 11.6" fill="none" stroke="#fff" stroke-width="1.5"/></svg>
<svg width="16" height="16" viewBox="0 0 16 16" style="left:260.7px;top:281.5px;"><circle cx="8" cy="8" r="6.5" fill="#9ba1d6"/><circle cx="8" cy="8" r="6.1" fill="none" stroke="#c9ccec" stroke-width="1" stroke-dasharray="1.4 1.1"/><path d="M4.3 8.2L8 4.6L11.7 8.2M4.3 11.6L8 8L11.7 11.6" fill="none" stroke="#fff" stroke-width="1.5"/></svg>
<svg width="15" height="15" viewBox="0 0 15 15" style="left:236px;top:305.5px;"><path d="M0.4 2.6H5" fill="none" stroke="#1c54b4" stroke-width="1.6"/><path d="M3.8 -0.4L7.6 2.6L3.8 5.6Z" fill="#1c54b4"/><rect x="8" y="1.8" width="6" height="3" fill="#4a4a4a"/><path d="M1.5 5H14V13.2H1.5ZM1.5 7.8H14M1.5 10.5H14M5.7 5V13.2M9.9 5V13.2" fill="#fff" stroke="#2a2a2a" stroke-width="1.05"/></svg>
<svg width="15" height="15" viewBox="0 0 15 15" style="left:260px;top:304.7px;"><rect x="1.5" y="2.5" width="11" height="11.5" rx="1.2" fill="#dde6f6" stroke="#6880b4" stroke-width="1"/><rect x="4.4" y="0.8" width="5.2" height="3.2" rx="1" fill="#d0a850" stroke="#8a6a20" stroke-width="0.7"/><path d="M3.6 8.4L6 11.6L11.6 4.4" fill="none" stroke="#e02c1c" stroke-width="1.9"/></svg>
<svg width="17" height="19" viewBox="0 0 17 19" style="left:262px;top:324px;"><rect x="0" y="0" width="17" height="19" fill="#f0f0f0"/><path d="M5.4 7.6H11.6L8.5 11Z" fill="#111"/></svg>
<svg width="15" height="15" viewBox="0 0 15 15" style="left:236px;top:368.5px;"><path d="M0.4 2.6H5" fill="none" stroke="#1c54b4" stroke-width="1.6"/><path d="M3.8 -0.4L7.6 2.6L3.8 5.6Z" fill="#1c54b4"/><rect x="8" y="1.8" width="6" height="3" fill="#4a4a4a"/><path d="M1.5 5H14V13.2H1.5ZM1.5 7.8H14M1.5 10.5H14M5.7 5V13.2M9.9 5V13.2" fill="#fff" stroke="#2a2a2a" stroke-width="1.05"/></svg>
<svg width="15" height="15" viewBox="0 0 15 15" style="left:260px;top:367.7px;"><rect x="1.5" y="2.5" width="11" height="11.5" rx="1.2" fill="#dde6f6" stroke="#6880b4" stroke-width="1"/><rect x="4.4" y="0.8" width="5.2" height="3.2" rx="1" fill="#d0a850" stroke="#8a6a20" stroke-width="0.7"/><path d="M3.6 8.4L6 11.6L11.6 4.4" fill="none" stroke="#e02c1c" stroke-width="1.9"/></svg>
<svg width="14" height="14" viewBox="0 0 14 14" style="left:263px;top:390px;"><rect x="0.5" y="0.5" width="12" height="12" fill="#fff" stroke="#333"/></svg>
<svg width="14" height="14" viewBox="0 0 14 14" style="left:263px;top:411px;"><rect x="0.5" y="0.5" width="12" height="12" fill="#fff" stroke="#333"/></svg>
<svg width="15" height="15" viewBox="0 0 15 15" style="left:236px;top:431.5px;"><path d="M0.4 2.6H5" fill="none" stroke="#1c54b4" stroke-width="1.6"/><path d="M3.8 -0.4L7.6 2.6L3.8 5.6Z" fill="#1c54b4"/><rect x="8" y="1.8" width="6" height="3" fill="#4a4a4a"/><path d="M1.5 5H14V13.2H1.5ZM1.5 7.8H14M1.5 10.5H14M5.7 5V13.2M9.9 5V13.2" fill="#fff" stroke="#2a2a2a" stroke-width="1.05"/></svg>
<svg width="15" height="15" viewBox="0 0 15 15" style="left:260px;top:430.7px;"><rect x="1.5" y="2.5" width="11" height="11.5" rx="1.2" fill="#dde6f6" stroke="#6880b4" stroke-width="1"/><rect x="4.4" y="0.8" width="5.2" height="3.2" rx="1" fill="#d0a850" stroke="#8a6a20" stroke-width="0.7"/><path d="M3.6 8.4L6 11.6L11.6 4.4" fill="none" stroke="#e02c1c" stroke-width="1.9"/></svg>
<svg width="15" height="15" viewBox="0 0 15 15" style="left:236px;top:452.5px;"><path d="M0.4 2.6H5" fill="none" stroke="#1c54b4" stroke-width="1.6"/><path d="M3.8 -0.4L7.6 2.6L3.8 5.6Z" fill="#1c54b4"/><rect x="8" y="1.8" width="6" height="3" fill="#4a4a4a"/><path d="M1.5 5H14V13.2H1.5ZM1.5 7.8H14M1.5 10.5H14M5.7 5V13.2M9.9 5V13.2" fill="#fff" stroke="#2a2a2a" stroke-width="1.05"/></svg>
<svg width="15" height="15" viewBox="0 0 15 15" style="left:260px;top:451.7px;"><rect x="1.5" y="2.5" width="11" height="11.5" rx="1.2" fill="#dde6f6" stroke="#6880b4" stroke-width="1"/><rect x="4.4" y="0.8" width="5.2" height="3.2" rx="1" fill="#d0a850" stroke="#8a6a20" stroke-width="0.7"/><path d="M3.6 8.4L6 11.6L11.6 4.4" fill="none" stroke="#e02c1c" stroke-width="1.9"/></svg>
<svg width="15" height="15" viewBox="0 0 15 15" style="left:236px;top:473.5px;"><path d="M0.4 2.6H5" fill="none" stroke="#1c54b4" stroke-width="1.6"/><path d="M3.8 -0.4L7.6 2.6L3.8 5.6Z" fill="#1c54b4"/><rect x="8" y="1.8" width="6" height="3" fill="#4a4a4a"/><path d="M1.5 5H14V13.2H1.5ZM1.5 7.8H14M1.5 10.5H14M5.7 5V13.2M9.9 5V13.2" fill="#fff" stroke="#2a2a2a" stroke-width="1.05"/></svg>
<svg width="15" height="15" viewBox="0 0 15 15" style="left:260px;top:472.7px;"><rect x="1.5" y="2.5" width="11" height="11.5" rx="1.2" fill="#dde6f6" stroke="#6880b4" stroke-width="1"/><rect x="4.4" y="0.8" width="5.2" height="3.2" rx="1" fill="#d0a850" stroke="#8a6a20" stroke-width="0.7"/><path d="M3.6 8.4L6 11.6L11.6 4.4" fill="none" stroke="#e02c1c" stroke-width="1.9"/></svg>
<svg width="15" height="15" viewBox="0 0 15 15" style="left:236px;top:494.5px;"><path d="M0.4 2.6H5" fill="none" stroke="#1c54b4" stroke-width="1.6"/><path d="M3.8 -0.4L7.6 2.6L3.8 5.6Z" fill="#1c54b4"/><rect x="8" y="1.8" width="6" height="3" fill="#4a4a4a"/><path d="M1.5 5H14V13.2H1.5ZM1.5 7.8H14M1.5 10.5H14M5.7 5V13.2M9.9 5V13.2" fill="#fff" stroke="#2a2a2a" stroke-width="1.05"/></svg>
<svg width="15" height="15" viewBox="0 0 15 15" style="left:260px;top:493.7px;"><rect x="1.5" y="2.5" width="11" height="11.5" rx="1.2" fill="#dde6f6" stroke="#6880b4" stroke-width="1"/><rect x="4.4" y="0.8" width="5.2" height="3.2" rx="1" fill="#d0a850" stroke="#8a6a20" stroke-width="0.7"/><path d="M3.6 8.4L6 11.6L11.6 4.4" fill="none" stroke="#e02c1c" stroke-width="1.9"/></svg>
<svg width="15" height="15" viewBox="0 0 15 15" style="left:236px;top:515.5px;"><path d="M0.4 2.6H5" fill="none" stroke="#1c54b4" stroke-width="1.6"/><path d="M3.8 -0.4L7.6 2.6L3.8 5.6Z" fill="#1c54b4"/><rect x="8" y="1.8" width="6" height="3" fill="#4a4a4a"/><path d="M1.5 5H14V13.2H1.5ZM1.5 7.8H14M1.5 10.5H14M5.7 5V13.2M9.9 5V13.2" fill="#fff" stroke="#2a2a2a" stroke-width="1.05"/></svg>
<svg width="15" height="15" viewBox="0 0 15 15" style="left:260px;top:514.7px;"><rect x="1.5" y="2.5" width="11" height="11.5" rx="1.2" fill="#dde6f6" stroke="#6880b4" stroke-width="1"/><rect x="4.4" y="0.8" width="5.2" height="3.2" rx="1" fill="#d0a850" stroke="#8a6a20" stroke-width="0.7"/><path d="M3.6 8.4L6 11.6L11.6 4.4" fill="none" stroke="#e02c1c" stroke-width="1.9"/></svg>
<svg width="15" height="15" viewBox="0 0 15 15" style="left:236px;top:536.5px;"><path d="M0.4 2.6H5" fill="none" stroke="#1c54b4" stroke-width="1.6"/><path d="M3.8 -0.4L7.6 2.6L3.8 5.6Z" fill="#1c54b4"/><rect x="8" y="1.8" width="6" height="3" fill="#4a4a4a"/><path d="M1.5 5H14V13.2H1.5ZM1.5 7.8H14M1.5 10.5H14M5.7 5V13.2M9.9 5V13.2" fill="#fff" stroke="#2a2a2a" stroke-width="1.05"/></svg>
<svg width="15" height="15" viewBox="0 0 15 15" style="left:260px;top:535.7px;"><rect x="1.5" y="2.5" width="11" height="11.5" rx="1.2" fill="#dde6f6" stroke="#6880b4" stroke-width="1"/><rect x="4.4" y="0.8" width="5.2" height="3.2" rx="1" fill="#d0a850" stroke="#8a6a20" stroke-width="0.7"/><path d="M3.6 8.4L6 11.6L11.6 4.4" fill="none" stroke="#e02c1c" stroke-width="1.9"/></svg>
<svg width="16" height="16" viewBox="0 0 16 16" style="left:260.7px;top:558.5px;"><circle cx="8" cy="8" r="6.5" fill="#9ba1d6"/><circle cx="8" cy="8" r="6.1" fill="none" stroke="#c9ccec" stroke-width="1" stroke-dasharray="1.4 1.1"/><path d="M4.3 8.2L8 4.6L11.7 8.2M4.3 11.6L8 8L11.7 11.6" fill="none" stroke="#fff" stroke-width="1.5"/></svg>
<svg width="14" height="14" viewBox="0 0 14 14" style="left:263px;top:583px;"><rect x="0.5" y="0.5" width="12" height="12" fill="#fff" stroke="#333"/><path d="M2.8 6.6l2.7 2.8l4.9-6" stroke="#222" stroke-width="1.25" fill="none"/></svg>
<svg width="16" height="16" viewBox="0 0 16 16" style="left:260.7px;top:604.5px;"><circle cx="8" cy="8" r="6.5" fill="#9ba1d6"/><circle cx="8" cy="8" r="6.1" fill="none" stroke="#c9ccec" stroke-width="1" stroke-dasharray="1.4 1.1"/><path d="M4.3 8.2L8 4.6L11.7 8.2M4.3 11.6L8 8L11.7 11.6" fill="none" stroke="#fff" stroke-width="1.5"/></svg>
<svg width="14" height="14" viewBox="0 0 14 14" style="left:263px;top:629px;"><rect x="0.5" y="0.5" width="12" height="12" fill="#fff" stroke="#333"/></svg>
<svg width="16" height="16" viewBox="0 0 16 16" style="left:260.7px;top:650.5px;"><circle cx="8" cy="8" r="6.5" fill="#9ba1d6"/><circle cx="8" cy="8" r="6.1" fill="none" stroke="#c9ccec" stroke-width="1" stroke-dasharray="1.4 1.1"/><path d="M4.3 8.2L8 4.6L11.7 8.2M4.3 11.6L8 8L11.7 11.6" fill="none" stroke="#fff" stroke-width="1.5"/></svg>
<svg width="15" height="15" viewBox="0 0 15 15" style="left:236px;top:674.5px;"><path d="M0.4 2.6H5" fill="none" stroke="#1c54b4" stroke-width="1.6"/><path d="M3.8 -0.4L7.6 2.6L3.8 5.6Z" fill="#1c54b4"/><rect x="8" y="1.8" width="6" height="3" fill="#4a4a4a"/><path d="M1.5 5H14V13.2H1.5ZM1.5 7.8H14M1.5 10.5H14M5.7 5V13.2M9.9 5V13.2" fill="#fff" stroke="#2a2a2a" stroke-width="1.05"/></svg>
<svg width="15" height="15" viewBox="0 0 15 15" style="left:260px;top:673.7px;"><rect x="1.5" y="2.5" width="11" height="11.5" rx="1.2" fill="#dde6f6" stroke="#6880b4" stroke-width="1"/><rect x="4.4" y="0.8" width="5.2" height="3.2" rx="1" fill="#d0a850" stroke="#8a6a20" stroke-width="0.7"/><path d="M3.6 8.4L6 11.6L11.6 4.4" fill="none" stroke="#e02c1c" stroke-width="1.9"/></svg>
<svg width="16" height="16" viewBox="0 0 16 16" style="left:260.7px;top:696.5px;"><circle cx="8" cy="8" r="6.5" fill="#9ba1d6"/><circle cx="8" cy="8" r="6.1" fill="none" stroke="#c9ccec" stroke-width="1" stroke-dasharray="1.4 1.1"/><path d="M4.3 8.2L8 4.6L11.7 8.2M4.3 11.6L8 8L11.7 11.6" fill="none" stroke="#fff" stroke-width="1.5"/></svg>
<svg width="26" height="19" viewBox="0 0 26 19" style="left:252px;top:718px;"><rect x="0.5" y="0.5" width="25" height="18" fill="#f2f2f2" stroke="#9a9a9a"/><rect x="6.5" y="5.5" width="10" height="9.5" fill="#fff" stroke="#3b5a9a"/><rect x="7" y="6" width="9" height="2.6" fill="#4a74c4"/><path d="M8.5 11h6M8.5 13h4" stroke="#7f95c0" stroke-width="1"/><path d="M11.5 12.5l7-7.6l2 1.8l-7 7.6l-2.8 0.9z" fill="#f0c040" stroke="#7a5a10" stroke-width="0.7"/></svg>
<div class="abs" style="left:0;top:782px;width:279px;height:96px;background:#fff"></div>
<div class="t " style="left:12.00px;top:792.69px;font-size:11px;transform:scaleX(0.9557);transform-origin:0 0;">Dimension in the longitudinal direction of the beam</div>
<div class="abs" style="left:287.5px;top:164px;width:40.5px;height:22px;background:#f2f6fc;border-radius:4px 4px 0 0"></div>
<div class="t " style="left:295.00px;top:168.69px;font-size:11px;transform:scaleX(0.9810);transform-origin:0 0;">Input</div>
<div class="t " style="left:342.00px;top:168.69px;font-size:11px;">Document</div>
<div class="abs" style="left:283px;top:185px;width:1316px;height:515px;background:#fff;border-right:1px solid #e0e0e0;border-bottom:1px solid #e0e0e0"></div>
<div class="abs" style="left:283px;top:185px;width:1315px;height:2px;background:#5a5a5a"></div>
<div class="abs" style="left:283px;top:185px;width:2px;height:514px;background:#5a5a5a"></div>
<svg width="1600" height="900" viewBox="0 0 1600 900" style="left:0;top:0;font-family:'DejaVu Sans Condensed','DejaVu Sans',sans-serif" shape-rendering="auto">
<defs><linearGradient id="rg" x1="0" y1="0" x2="0" y2="1"><stop offset="0" stop-color="#d40000"/><stop offset="1" stop-color="#6e0000"/></linearGradient><linearGradient id="tg" x1="0" y1="0" x2="0" y2="1"><stop offset="0" stop-color="#22a0a0"/><stop offset="1" stop-color="#0a6060"/></linearGradient></defs>
<text x="293.5" y="208.5" font-size="12" text-anchor="start" fill="#000" textLength="701.0" lengthAdjust="spacingAndGlyphs">Timber beam by 2 Spans, DIN EN 1995:2013, Softwood C30, CS constant 10/18, with self-weight/Beam spacing (0.80 m)</text>
<text x="293.5" y="226.3" font-size="12" text-anchor="start" fill="#000" textLength="121.5" lengthAdjust="spacingAndGlyphs">Grafik: Arbeitsansicht</text>
<rect x="440.5" y="241.3" width="1001.5" height="38.4" fill="#f6e6e6" stroke="#cc4a52" stroke-width="1.3"/>
<rect x="440.5" y="283.6" width="1001.5" height="26.9" fill="#e6f2f2" stroke="#3a9c9c" stroke-width="1.25"/>
<path d="M440.50 241.5V270M460.14 241.5V270M479.77 241.5V270M499.41 241.5V270M519.05 241.5V270M538.69 241.5V270M558.32 241.5V270M577.96 241.5V270M597.60 241.5V270M617.24 241.5V270M636.87 241.5V270M656.51 241.5V270M676.15 241.5V270M695.78 241.5V270M715.42 241.5V270M735.06 241.5V270M754.70 241.5V270M774.33 241.5V270M793.97 241.5V270M813.61 241.5V270M833.25 241.5V270M852.88 241.5V270M872.52 241.5V270M892.16 241.5V270M911.79 241.5V270M931.43 241.5V270M951.07 241.5V270M970.71 241.5V270M990.34 241.5V270M1009.98 241.5V270M1029.62 241.5V270M1049.25 241.5V270M1068.89 241.5V270M1088.53 241.5V270M1108.17 241.5V270M1127.80 241.5V270M1147.44 241.5V270M1167.08 241.5V270M1186.72 241.5V270M1206.35 241.5V270M1225.99 241.5V270M1245.63 241.5V270M1265.26 241.5V270M1284.90 241.5V270M1304.54 241.5V270M1324.18 241.5V270M1343.81 241.5V270M1363.45 241.5V270M1383.09 241.5V270M1402.73 241.5V270M1422.36 241.5V270M1442.00 241.5V270" stroke="#c80000" stroke-width="1.55" fill="none"/>
<path d="M437.90 268.3L443.10 268.3L440.50 279.6ZM457.54 268.3L462.74 268.3L460.14 279.6ZM477.17 268.3L482.37 268.3L479.77 279.6ZM496.81 268.3L502.01 268.3L499.41 279.6ZM516.45 268.3L521.65 268.3L519.05 279.6ZM536.09 268.3L541.29 268.3L538.69 279.6ZM555.72 268.3L560.92 268.3L558.32 279.6ZM575.36 268.3L580.56 268.3L577.96 279.6ZM595.00 268.3L600.20 268.3L597.60 279.6ZM614.64 268.3L619.84 268.3L617.24 279.6ZM634.27 268.3L639.47 268.3L636.87 279.6ZM653.91 268.3L659.11 268.3L656.51 279.6ZM673.55 268.3L678.75 268.3L676.15 279.6ZM693.18 268.3L698.38 268.3L695.78 279.6ZM712.82 268.3L718.02 268.3L715.42 279.6ZM732.46 268.3L737.66 268.3L735.06 279.6ZM752.10 268.3L757.30 268.3L754.70 279.6ZM771.73 268.3L776.93 268.3L774.33 279.6ZM791.37 268.3L796.57 268.3L793.97 279.6ZM811.01 268.3L816.21 268.3L813.61 279.6ZM830.65 268.3L835.85 268.3L833.25 279.6ZM850.28 268.3L855.48 268.3L852.88 279.6ZM869.92 268.3L875.12 268.3L872.52 279.6ZM889.56 268.3L894.76 268.3L892.16 279.6ZM909.19 268.3L914.39 268.3L911.79 279.6ZM928.83 268.3L934.03 268.3L931.43 279.6ZM948.47 268.3L953.67 268.3L951.07 279.6ZM968.11 268.3L973.31 268.3L970.71 279.6ZM987.74 268.3L992.94 268.3L990.34 279.6ZM1007.38 268.3L1012.58 268.3L1009.98 279.6ZM1027.02 268.3L1032.22 268.3L1029.62 279.6ZM1046.65 268.3L1051.85 268.3L1049.25 279.6ZM1066.29 268.3L1071.49 268.3L1068.89 279.6ZM1085.93 268.3L1091.13 268.3L1088.53 279.6ZM1105.57 268.3L1110.77 268.3L1108.17 279.6ZM1125.20 268.3L1130.40 268.3L1127.80 279.6ZM1144.84 268.3L1150.04 268.3L1147.44 279.6ZM1164.48 268.3L1169.68 268.3L1167.08 279.6ZM1184.12 268.3L1189.32 268.3L1186.72 279.6ZM1203.75 268.3L1208.95 268.3L1206.35 279.6ZM1223.39 268.3L1228.59 268.3L1225.99 279.6ZM1243.03 268.3L1248.23 268.3L1245.63 279.6ZM1262.66 268.3L1267.86 268.3L1265.26 279.6ZM1282.30 268.3L1287.50 268.3L1284.90 279.6ZM1301.94 268.3L1307.14 268.3L1304.54 279.6ZM1321.58 268.3L1326.78 268.3L1324.18 279.6ZM1341.21 268.3L1346.41 268.3L1343.81 279.6ZM1360.85 268.3L1366.05 268.3L1363.45 279.6ZM1380.49 268.3L1385.69 268.3L1383.09 279.6ZM1400.13 268.3L1405.33 268.3L1402.73 279.6ZM1419.76 268.3L1424.96 268.3L1422.36 279.6ZM1439.40 268.3L1444.60 268.3L1442.00 279.6Z" fill="url(#rg)"/>
<path d="M440.50 284.2V304M460.14 284.2V304M479.77 284.2V304M499.41 284.2V304M519.05 284.2V304M538.69 284.2V304M558.32 284.2V304M577.96 284.2V304M597.60 284.2V304M617.24 284.2V304M636.87 284.2V304M656.51 284.2V304M676.15 284.2V304M695.78 284.2V304M715.42 284.2V304M735.06 284.2V304M754.70 284.2V304M774.33 284.2V304M793.97 284.2V304M813.61 284.2V304M833.25 284.2V304M852.88 284.2V304M872.52 284.2V304M892.16 284.2V304M911.79 284.2V304M931.43 284.2V304M951.07 284.2V304M970.71 284.2V304M990.34 284.2V304M1009.98 284.2V304M1029.62 284.2V304M1049.25 284.2V304M1068.89 284.2V304M1088.53 284.2V304M1108.17 284.2V304M1127.80 284.2V304M1147.44 284.2V304M1167.08 284.2V304M1186.72 284.2V304M1206.35 284.2V304M1225.99 284.2V304M1245.63 284.2V304M1265.26 284.2V304M1284.90 284.2V304M1304.54 284.2V304M1324.18 284.2V304M1343.81 284.2V304M1363.45 284.2V304M1383.09 284.2V304M1402.73 284.2V304M1422.36 284.2V304M1442.00 284.2V304" stroke="#1c9a9a" stroke-width="1.1" fill="none"/>
<path d="M438.40 302.6L442.60 302.6L440.50 310.4ZM458.04 302.6L462.24 302.6L460.14 310.4ZM477.67 302.6L481.87 302.6L479.77 310.4ZM497.31 302.6L501.51 302.6L499.41 310.4ZM516.95 302.6L521.15 302.6L519.05 310.4ZM536.59 302.6L540.79 302.6L538.69 310.4ZM556.22 302.6L560.42 302.6L558.32 310.4ZM575.86 302.6L580.06 302.6L577.96 310.4ZM595.50 302.6L599.70 302.6L597.60 310.4ZM615.14 302.6L619.34 302.6L617.24 310.4ZM634.77 302.6L638.97 302.6L636.87 310.4ZM654.41 302.6L658.61 302.6L656.51 310.4ZM674.05 302.6L678.25 302.6L676.15 310.4ZM693.68 302.6L697.88 302.6L695.78 310.4ZM713.32 302.6L717.52 302.6L715.42 310.4ZM732.96 302.6L737.16 302.6L735.06 310.4ZM752.60 302.6L756.80 302.6L754.70 310.4ZM772.23 302.6L776.43 302.6L774.33 310.4ZM791.87 302.6L796.07 302.6L793.97 310.4ZM811.51 302.6L815.71 302.6L813.61 310.4ZM831.15 302.6L835.35 302.6L833.25 310.4ZM850.78 302.6L854.98 302.6L852.88 310.4ZM870.42 302.6L874.62 302.6L872.52 310.4ZM890.06 302.6L894.26 302.6L892.16 310.4ZM909.69 302.6L913.89 302.6L911.79 310.4ZM929.33 302.6L933.53 302.6L931.43 310.4ZM948.97 302.6L953.17 302.6L951.07 310.4ZM968.61 302.6L972.81 302.6L970.71 310.4ZM988.24 302.6L992.44 302.6L990.34 310.4ZM1007.88 302.6L1012.08 302.6L1009.98 310.4ZM1027.52 302.6L1031.72 302.6L1029.62 310.4ZM1047.15 302.6L1051.35 302.6L1049.25 310.4ZM1066.79 302.6L1070.99 302.6L1068.89 310.4ZM1086.43 302.6L1090.63 302.6L1088.53 310.4ZM1106.07 302.6L1110.27 302.6L1108.17 310.4ZM1125.70 302.6L1129.90 302.6L1127.80 310.4ZM1145.34 302.6L1149.54 302.6L1147.44 310.4ZM1164.98 302.6L1169.18 302.6L1167.08 310.4ZM1184.62 302.6L1188.82 302.6L1186.72 310.4ZM1204.25 302.6L1208.45 302.6L1206.35 310.4ZM1223.89 302.6L1228.09 302.6L1225.99 310.4ZM1243.53 302.6L1247.73 302.6L1245.63 310.4ZM1263.16 302.6L1267.36 302.6L1265.26 310.4ZM1282.80 302.6L1287.00 302.6L1284.90 310.4ZM1302.44 302.6L1306.64 302.6L1304.54 310.4ZM1322.08 302.6L1326.28 302.6L1324.18 310.4ZM1341.71 302.6L1345.91 302.6L1343.81 310.4ZM1361.35 302.6L1365.55 302.6L1363.45 310.4ZM1380.99 302.6L1385.19 302.6L1383.09 310.4ZM1400.63 302.6L1404.83 302.6L1402.73 310.4ZM1420.26 302.6L1424.46 302.6L1422.36 310.4ZM1439.90 302.6L1444.10 302.6L1442.00 310.4Z" fill="url(#tg)"/>
<rect x="924.8" y="253.6" width="31.6" height="13.9" fill="#fff" stroke="#707070" stroke-width="1"/>
<rect x="924.8" y="289.6" width="31.6" height="13.9" fill="#fff" stroke="#707070" stroke-width="1"/>
<text x="940.8" y="264.8" font-size="12" text-anchor="middle" fill="#000" textLength="21.0" lengthAdjust="spacingAndGlyphs">2,24</text>
<text x="940.8" y="300.8" font-size="12" text-anchor="middle" fill="#000" textLength="21.0" lengthAdjust="spacingAndGlyphs">1,56</text>
<text x="417.5" y="320.9" font-size="10.5" text-anchor="start" fill="#000" textLength="56.0" lengthAdjust="spacingAndGlyphs" stroke="#000" stroke-width="0.22">Wood core</text>
<text x="924.4" y="339.6" font-size="10" text-anchor="start" fill="#000" textLength="90.4" lengthAdjust="spacingAndGlyphs">Verb. 1 (FB ø 20.0)</text>
<text x="1042.4" y="339.6" font-size="10" text-anchor="start" fill="#000" textLength="90.4" lengthAdjust="spacingAndGlyphs">Verb. 2 (FB ø 20.0)</text>
<path d="M941.2 349.5 Q942.7 346.6 946.2 346.6 L967.2 346.6 L970.7 343.70000000000005 L974.2 346.6 L995.2 346.6 Q998.7 346.6 1000.2 349.5" fill="none" stroke="#7c7cb0" stroke-width="1.15"/>
<path d="M1059 349.5 Q1060.5 346.6 1064 346.6 L1084.9 346.6 L1088.4 343.70000000000005 L1091.9 346.6 L1112.8 346.6 Q1116.3 346.6 1117.8 349.5" fill="none" stroke="#7c7cb0" stroke-width="1.15"/>
<text x="937.1" y="360" font-size="10" text-anchor="start" fill="#000" textLength="65.0" lengthAdjust="spacingAndGlyphs">(alle 20.0 cm)</text>
<text x="1054.9" y="360" font-size="10" text-anchor="start" fill="#000" textLength="64.9" lengthAdjust="spacingAndGlyphs">(alle 20.0 cm)</text>
<text x="943.6" y="374.6" font-size="10" text-anchor="start" fill="#000" textLength="170.3" lengthAdjust="spacingAndGlyphs">UPE 160 (from x = 3.30 to x =4.70)</text>
<path d="M926 384.29999999999995 Q927.5 381.4 931 381.4 L1025.7 381.4 L1029.2 378.5 L1032.7 381.4 L1127.4 381.4 Q1130.9 381.4 1132.4 384.29999999999995" fill="none" stroke="#7c7cb0" stroke-width="1.15"/>
<path d="M901 369.5H911V391.3H901" fill="none" stroke="#1c2540" stroke-width="2"/>
<path d="M921.4 481.3H911.6V502.7H921.4" fill="none" stroke="#1c2540" stroke-width="2"/>
<path d="M926 492.0 Q927.5 494.9 931 494.9 L1025.7 494.9 L1029.2 497.79999999999995 L1032.7 494.9 L1127.4 494.9 Q1130.9 494.9 1132.4 492.0" fill="none" stroke="#7c7cb0" stroke-width="1.15"/>
<text x="943.6" y="508.2" font-size="10" text-anchor="start" fill="#000" textLength="170.3" lengthAdjust="spacingAndGlyphs">UPE 160 (from x = 3.30 to x =4.70)</text>
<text x="924.4" y="536.2" font-size="10" text-anchor="start" fill="#000" textLength="90.4" lengthAdjust="spacingAndGlyphs">Verb. 1 (FB ø 20.0)</text>
<text x="1042.4" y="536.2" font-size="10" text-anchor="start" fill="#000" textLength="90.4" lengthAdjust="spacingAndGlyphs">Verb. 2 (FB ø 20.0)</text>
<path d="M941.2 538.6 Q942.7 541.5 946.2 541.5 L967.2 541.5 L970.7 544.4 L974.2 541.5 L995.2 541.5 Q998.7 541.5 1000.2 538.6" fill="none" stroke="#7c7cb0" stroke-width="1.15"/>
<path d="M1059 538.6 Q1060.5 541.5 1064 541.5 L1084.9 541.5 L1088.4 544.4 L1091.9 541.5 L1112.8 541.5 Q1116.3 541.5 1117.8 538.6" fill="none" stroke="#7c7cb0" stroke-width="1.15"/>
<text x="937.1" y="555.7" font-size="10" text-anchor="start" fill="#000" textLength="65.0" lengthAdjust="spacingAndGlyphs">(alle 20.0 cm)</text>
<text x="1054.9" y="555.7" font-size="10" text-anchor="start" fill="#000" textLength="64.9" lengthAdjust="spacingAndGlyphs">(alle 20.0 cm)</text>
<rect x="416.9" y="445" width="35.700000000000045" height="31.5" fill="#eeeeee"/>
<path d="M416.9 445V476.5M452.6 445V476.5M416.9 468.8L452.6 453.5" stroke="#3c3c3c" stroke-width="1.2" fill="none"/>
<rect x="1011.4" y="445" width="35.80000000000007" height="31.5" fill="#eeeeee"/>
<path d="M1011.4 445V476.5M1047.2 445V476.5M1011.4 468.8L1047.2 453.5" stroke="#3c3c3c" stroke-width="1.2" fill="none"/>
<rect x="1429.8" y="445" width="35.40000000000009" height="31.5" fill="#eeeeee"/>
<path d="M1429.8 445V476.5M1465.2 445V476.5M1429.8 468.8L1465.2 453.5" stroke="#3c3c3c" stroke-width="1.2" fill="none"/>
<rect x="416.9" y="419.5" width="1048.3" height="26" fill="#fdf3b0" stroke="#4a4a4a" stroke-width="1.2"/>
<text x="533" y="438.8" font-size="10" text-anchor="start" fill="#000" textLength="203.0" lengthAdjust="spacingAndGlyphs" stroke="#000" stroke-width="0.22">Timber beam Softwood C30, e =80.0 cm</text>
<text x="927.7" y="435.6" font-size="10" text-anchor="start" fill="#000" textLength="27.6" lengthAdjust="spacingAndGlyphs">10/18</text>
<circle cx="1029.3" cy="432.2" r="3.9" fill="none" stroke="#222" stroke-width="1.1"/>
<path d="M959.5 399.3H1006.6V414.6H1002.1L998.5 417.8L994.9 414.6H959.5Z" fill="#fdf5a6" stroke="#555" stroke-width="1"/>
<text x="963.1" y="411.9" font-size="11.6" text-anchor="start" fill="#000" textLength="34.5" lengthAdjust="spacingAndGlyphs">Span 1</text>
<path d="M1387.5 399.3H1434V414.6H1429.6L1426 417.8L1422.4 414.6H1387.5Z" fill="#fdf5a6" stroke="#555" stroke-width="1"/>
<text x="1391.2" y="411.9" font-size="11.6" text-anchor="start" fill="#000" textLength="34.4" lengthAdjust="spacingAndGlyphs">Span 2</text>
<path d="M433 603.5H1449.5" stroke="#5c5c98" stroke-width="1.1"/>
<path d="M440.5 583V610.5M438.5 605.5L442.5 601.5" stroke="#5c5c98" stroke-width="1" fill="none"/>
<path d="M1029.4 583V610.5M1027.4 605.5L1031.4 601.5" stroke="#5c5c98" stroke-width="1" fill="none"/>
<path d="M1441.6 583V610.5M1439.6 605.5L1443.6 601.5" stroke="#5c5c98" stroke-width="1" fill="none"/>
<path d="M459 626.6H1422" stroke="#8e8e8e" stroke-width="1.2"/>
<path d="M409.3 626.6H459M1003 626.6H1056M1422 626.6H1473" stroke="#7474b0" stroke-width="1.1"/>
<path d="M416.9 606V634.5M414.9 628.6L418.9 624.6" stroke="#7474b0" stroke-width="1" fill="none"/>
<path d="M452.4 606V634.5M450.4 628.6L454.4 624.6" stroke="#7474b0" stroke-width="1" fill="none"/>
<path d="M1011.4 606V634.5M1009.4 628.6L1013.4 624.6" stroke="#7474b0" stroke-width="1" fill="none"/>
<path d="M1047.1 606V634.5M1045.1 628.6L1049.1 624.6" stroke="#7474b0" stroke-width="1" fill="none"/>
<path d="M1429.7 606V634.5M1427.7 628.6L1431.7 624.6" stroke="#7474b0" stroke-width="1" fill="none"/>
<path d="M1465.1 606V634.5M1463.1 628.6L1467.1 624.6" stroke="#7474b0" stroke-width="1" fill="none"/>
<path d="M433 649.8H1449.5" stroke="#8e8e8e" stroke-width="1.2"/>
<path d="M440.5 629.5V657.5M438.5 651.8L442.5 647.8" stroke="#6e6e6e" stroke-width="1" fill="none"/>
<path d="M1441.6 629.5V657.5M1439.6 651.8L1443.6 647.8" stroke="#6e6e6e" stroke-width="1" fill="none"/>
<text x="734.2" y="600" font-size="10" text-anchor="middle" fill="#000" textLength="22.5" lengthAdjust="spacingAndGlyphs">4,00</text>
<text x="1234.6" y="600" font-size="10" text-anchor="middle" fill="#000" textLength="22.5" lengthAdjust="spacingAndGlyphs">2,80</text>
<text x="731.7" y="623.2" font-size="10" text-anchor="middle" fill="#909090" textLength="21.5" lengthAdjust="spacingAndGlyphs">3,80</text>
<text x="1237.8" y="623.2" font-size="10" text-anchor="middle" fill="#909090" textLength="21.5" lengthAdjust="spacingAndGlyphs">2,60</text>
<text x="940.3" y="646.4" font-size="10" text-anchor="middle" fill="#909090" textLength="21.5" lengthAdjust="spacingAndGlyphs">6,80</text>
<text x="435" y="622.9" font-size="10" text-anchor="middle" fill="#000" textLength="12.2" lengthAdjust="spacingAndGlyphs">24</text>
<text x="1029.2" y="622.9" font-size="10" text-anchor="middle" fill="#000" textLength="12.2" lengthAdjust="spacingAndGlyphs">24</text>
<text x="1447.2" y="622.9" font-size="10" text-anchor="middle" fill="#000" textLength="12.2" lengthAdjust="spacingAndGlyphs">24</text>
<path d="M335.1 647.6H363M335.1 647.6V675" stroke="#0000ff" stroke-width="1.8" fill="none"/>
<path d="M361 643.8L373.2 647.6L361 651.4Z M331.3 673.2L338.9 673.2L335.1 685.2Z" fill="#0000ff"/>
<circle cx="335.1" cy="647.6" r="2.4" fill="#ff0000"/>
<text x="374" y="654.1" font-size="15.3" text-anchor="start" fill="#000" textLength="9.3" lengthAdjust="spacingAndGlyphs">X</text>
<text x="330.5" y="697" font-size="14.6" text-anchor="start" fill="#000" textLength="8.7" lengthAdjust="spacingAndGlyphs">Z</text>
<rect x="383.5" y="369.7" width="21" height="21.6" rx="1.5" fill="#fff" stroke="#8a8a8a" stroke-width="1"/>
<rect x="390.2" y="373.7" width="6.8" height="13.4" fill="#e6c400"/>
<path d="M384.4 374.6H388.6V386.2H384.4M403.2 374.6H399V386.2H403.2" fill="none" stroke="#0000ff" stroke-width="1.9"/>
<rect x="385.4" y="398.1" width="16.7" height="11.4" fill="#f3dc78"/><rect x="390.2" y="396.6" width="6.8" height="14.2" fill="#b39562"/>
<circle cx="374.4" cy="426.7" r="4.6" fill="#fff" stroke="#7474a6" stroke-width="1.5"/>
<path d="M369.09999999999997 426.3A5.3 5.3 0 0 1 379.7 426.3Z" fill="#7272a2"/>
<rect x="375.59999999999997" y="427.3" width="7" height="8" fill="#fff"/>
<text x="376.5" y="434.7" font-size="8.6" text-anchor="start" fill="#000" textLength="4.6" lengthAdjust="spacingAndGlyphs">F</text>
<circle cx="393.8" cy="426.8" r="5.3" fill="#7676a6"/>
<path d="M392.7 422.7h2.2v3h3v2.2h-3v3h-2.2v-3h-3v-2.2h3z" fill="#fff"/>
<rect x="395.0" y="427.40000000000003" width="7" height="8" fill="#fff"/>
<text x="395.90000000000003" y="434.8" font-size="8.6" text-anchor="start" fill="#000" textLength="4.8" lengthAdjust="spacingAndGlyphs">F</text>
<circle cx="393.8" cy="446.5" r="5.3" fill="#7676a6"/>
<path d="M392.7 442.4h2.2v3h3v2.2h-3v3h-2.2v-3h-3v-2.2h3z" fill="#fff"/>
<rect x="395.0" y="447.1" width="7" height="8" fill="#fff"/>
<text x="395.90000000000003" y="454.5" font-size="8.6" text-anchor="start" fill="#000" textLength="4.8" lengthAdjust="spacingAndGlyphs">K</text>
<circle cx="1488.3" cy="426.8" r="5.3" fill="#7676a6"/>
<path d="M1487.2 422.7h2.2v3h3v2.2h-3v3h-2.2v-3h-3v-2.2h3z" fill="#fff"/>
<rect x="1489.5" y="427.40000000000003" width="7" height="8" fill="#fff"/>
<text x="1490.3999999999999" y="434.8" font-size="8.6" text-anchor="start" fill="#000" textLength="4.8" lengthAdjust="spacingAndGlyphs">F</text>
<circle cx="1507.7" cy="426.8" r="4.6" fill="#fff" stroke="#7474a6" stroke-width="1.5"/>
<path d="M1502.4 426.40000000000003A5.3 5.3 0 0 1 1513.0 426.40000000000003Z" fill="#7272a2"/>
<rect x="1508.9" y="427.40000000000003" width="7" height="8" fill="#fff"/>
<text x="1509.8" y="434.8" font-size="8.6" text-anchor="start" fill="#000" textLength="4.6" lengthAdjust="spacingAndGlyphs">F</text>
<circle cx="1488.3" cy="446.7" r="5.3" fill="#7676a6"/>
<path d="M1487.2 442.59999999999997h2.2v3h3v2.2h-3v3h-2.2v-3h-3v-2.2h3z" fill="#fff"/>
<rect x="1489.5" y="447.3" width="7" height="8" fill="#fff"/>
<text x="1490.3999999999999" y="454.7" font-size="8.6" text-anchor="start" fill="#000" textLength="4.8" lengthAdjust="spacingAndGlyphs">K</text>
<rect x="1568.5" y="194.5" width="23.5" height="23.3" fill="#fbfbfb" stroke="#d6d6d6" stroke-width="1"/>
<path d="M1572.4 213.5L1588.2 198.2" stroke="#f0a040" stroke-width="1"/>
<text x="1570" y="203.8" font-size="8" font-weight="bold" fill="#555" font-family="Liberation Sans,sans-serif" textLength="11.5" lengthAdjust="spacingAndGlyphs">2D</text>
<text x="1579" y="213.8" font-size="8" font-weight="bold" fill="#555" font-family="Liberation Sans,sans-serif" textLength="11.5" lengthAdjust="spacingAndGlyphs">3D</text>
<g fill="none" stroke="#000" stroke-width="1.3" stroke-linecap="round" stroke-linejoin="round"><path d="M1575.6 227.4L1577 224.6H1583.4L1584.8 227.4"/><rect x="1570.8" y="227.4" width="18.6" height="3.4" rx="1.6"/><path d="M1572.8 230.8V245.2Q1572.8 247.4 1575 247.4H1585.2Q1587.4 247.4 1587.4 245.2V230.8"/><path d="M1576.7 233.2V244M1580.1 233.2V244M1583.6 233.2V244"/></g>
</svg>
<div class="abs" style="left:282px;top:700px;width:1318px;height:4px;background:#f4f4f4"></div>
<div class="abs" style="left:282px;top:704px;width:1318px;height:24px;background:#bccfe8"></div>
<div class="abs" style="left:282px;top:728px;width:1318px;height:150px;background:#fff"></div>
<div class="abs" style="left:418px;top:707px;width:74px;height:21px;background:#f1f6fd;border-radius:4px 4px 0 0"></div>
<svg width="15" height="14" style="left:294px;top:710px;opacity:0.8"><rect x="0.5" y="0.5" width="14" height="12.5" fill="#fbfcfe" stroke="#a9badb"/><rect x="1" y="1" width="13" height="3" fill="#6f9be0"/><rect x="1" y="2.6" width="13" height="1.6" fill="#a9c4ee"/><path d="M1 6.8h13M1 9.8h13M4.5 4.4v8.4M8 4.4v8.4M11.5 4.4v8.4" stroke="#bcc8dc" stroke-width="1" fill="none"/></svg>
<div class="t" style="left:317.00px;top:712.27px;font-size:11.5px;transform:scaleX(0.9363);transform-origin:0 0;">Spans/Segments</div>
<svg width="15" height="14" style="left:424px;top:710px;opacity:1"><rect x="0.5" y="0.5" width="14" height="12.5" fill="#fbfcfe" stroke="#a9badb"/><rect x="1" y="1" width="13" height="3" fill="#6f9be0"/><rect x="1" y="2.6" width="13" height="1.6" fill="#a9c4ee"/><path d="M1 6.8h13M1 9.8h13M4.5 4.4v8.4M8 4.4v8.4M11.5 4.4v8.4" stroke="#bcc8dc" stroke-width="1" fill="none"/></svg>
<div class="t" style="left:447.00px;top:712.27px;font-size:11.5px;transform:scaleX(0.9646);transform-origin:0 0;">support</div>
<svg width="15" height="14" style="left:505px;top:710px;opacity:0.8"><rect x="0.5" y="0.5" width="14" height="12.5" fill="#fbfcfe" stroke="#a9badb"/><rect x="1" y="1" width="13" height="3" fill="#6f9be0"/><rect x="1" y="2.6" width="13" height="1.6" fill="#a9c4ee"/><path d="M1 6.8h13M1 9.8h13M4.5 4.4v8.4M8 4.4v8.4M11.5 4.4v8.4" stroke="#bcc8dc" stroke-width="1" fill="none"/></svg>
<div class="t" style="left:528.00px;top:712.27px;font-size:11.5px;transform:scaleX(0.9653);transform-origin:0 0;">Joints</div>
<svg width="15" height="14" style="left:578px;top:710px;opacity:0.8"><rect x="0.5" y="0.5" width="14" height="12.5" fill="#fbfcfe" stroke="#a9badb"/><rect x="1" y="1" width="13" height="3" fill="#6f9be0"/><rect x="1" y="2.6" width="13" height="1.6" fill="#a9c4ee"/><path d="M1 6.8h13M1 9.8h13M4.5 4.4v8.4M8 4.4v8.4M11.5 4.4v8.4" stroke="#bcc8dc" stroke-width="1" fill="none"/></svg>
<div class="t" style="left:601.00px;top:712.27px;font-size:11.5px;transform:scaleX(0.9958);transform-origin:0 0;">Qs Holzkern</div>
<svg width="15" height="14" style="left:684px;top:710px;opacity:0.8"><rect x="0.5" y="0.5" width="14" height="12.5" fill="#fbfcfe" stroke="#a9badb"/><rect x="1" y="1" width="13" height="3" fill="#6f9be0"/><rect x="1" y="2.6" width="13" height="1.6" fill="#a9c4ee"/><path d="M1 6.8h13M1 9.8h13M4.5 4.4v8.4M8 4.4v8.4M11.5 4.4v8.4" stroke="#bcc8dc" stroke-width="1" fill="none"/></svg>
<div class="t" style="left:707.00px;top:712.27px;font-size:11.5px;transform:scaleX(0.9938);transform-origin:0 0;">Qs Verst.</div>
<svg width="15" height="14" style="left:775px;top:710px;opacity:0.8"><rect x="0.5" y="0.5" width="14" height="12.5" fill="#fbfcfe" stroke="#a9badb"/><rect x="1" y="1" width="13" height="3" fill="#6f9be0"/><rect x="1" y="2.6" width="13" height="1.6" fill="#a9c4ee"/><path d="M1 6.8h13M1 9.8h13M4.5 4.4v8.4M8 4.4v8.4M11.5 4.4v8.4" stroke="#bcc8dc" stroke-width="1" fill="none"/></svg>
<div class="t" style="left:798.00px;top:712.27px;font-size:11.5px;transform:scaleX(0.9892);transform-origin:0 0;">Verst. links</div>
<svg width="15" height="14" style="left:874px;top:710px;opacity:0.8"><rect x="0.5" y="0.5" width="14" height="12.5" fill="#fbfcfe" stroke="#a9badb"/><rect x="1" y="1" width="13" height="3" fill="#6f9be0"/><rect x="1" y="2.6" width="13" height="1.6" fill="#a9c4ee"/><path d="M1 6.8h13M1 9.8h13M4.5 4.4v8.4M8 4.4v8.4M11.5 4.4v8.4" stroke="#bcc8dc" stroke-width="1" fill="none"/></svg>
<div class="t" style="left:897.00px;top:712.27px;font-size:11.5px;transform:scaleX(0.9857);transform-origin:0 0;">Verst. rechts</div>
<svg width="15" height="14" style="left:981px;top:710px;opacity:0.8"><rect x="0.5" y="0.5" width="14" height="12.5" fill="#fbfcfe" stroke="#a9badb"/><rect x="1" y="1" width="13" height="3" fill="#6f9be0"/><rect x="1" y="2.6" width="13" height="1.6" fill="#a9c4ee"/><path d="M1 6.8h13M1 9.8h13M4.5 4.4v8.4M8 4.4v8.4M11.5 4.4v8.4" stroke="#bcc8dc" stroke-width="1" fill="none"/></svg>
<div class="t" style="left:1004.00px;top:712.27px;font-size:11.5px;transform:scaleX(0.9736);transform-origin:0 0;">Verbindungsmittel</div>
<svg width="15" height="14" style="left:1116px;top:710px;opacity:0.8"><rect x="0.5" y="0.5" width="14" height="12.5" fill="#fbfcfe" stroke="#a9badb"/><rect x="1" y="1" width="13" height="3" fill="#6f9be0"/><rect x="1" y="2.6" width="13" height="1.6" fill="#a9c4ee"/><path d="M1 6.8h13M1 9.8h13M4.5 4.4v8.4M8 4.4v8.4M11.5 4.4v8.4" stroke="#bcc8dc" stroke-width="1" fill="none"/></svg>
<div class="t" style="left:1139.00px;top:712.27px;font-size:11.5px;transform:scaleX(0.9522);transform-origin:0 0;">Sections</div>
<svg width="15" height="14" style="left:1203px;top:710px;opacity:0.8"><rect x="0.5" y="0.5" width="14" height="12.5" fill="#fbfcfe" stroke="#a9badb"/><rect x="1" y="1" width="13" height="3" fill="#6f9be0"/><rect x="1" y="2.6" width="13" height="1.6" fill="#a9c4ee"/><path d="M1 6.8h13M1 9.8h13M4.5 4.4v8.4M8 4.4v8.4M11.5 4.4v8.4" stroke="#bcc8dc" stroke-width="1" fill="none"/></svg>
<div class="t" style="left:1226.00px;top:712.27px;font-size:11.5px;transform:scaleX(0.9255);transform-origin:0 0;">Loads</div>
<svg width="10" height="10" style="left:1587px;top:711px"><path d="M1 1L8.5 8.5M8.5 1L1 8.5" stroke="#111" stroke-width="1.5"/></svg>
<div class="abs" style="left:338px;top:743px;width:1196px;height:21px;background:linear-gradient(#f7f7f7,#f1f1f1 45%,#d9d9d9)"></div>
<div class="abs" style="left:338px;top:764px;width:1196px;height:44px;background:#f0f0f0"></div>
<div class="abs" style="left:338px;top:808px;width:1196px;height:21px;background:#fbd96a"></div>
<div class="abs" style="left:338px;top:829px;width:1196px;height:43px;background:#fff"></div>
<svg width="1600" height="900" style="left:0;top:0"><path d="M338 743.5H1534M338 764.5H1534M338 786.5H1534M338 808.5H1534M338 829.5H1534M338 850.5H1534M338 871.5H1534M338.5 743V872M443.5 765V872M527.5 765V872M611.5 765V872M695.5 765V872M796.5 765V872M886.5 765V872M995.5 743V872M1079.5 765V872M1172.5 765V872M1249.5 743V872M1332.5 765V872M1533.5 743V872" stroke="#5e5e5e" stroke-width="1" fill="none" shape-rendering="crispEdges"/></svg>
<div class="t" style="left:610.10px;top:749.34px;font-size:12px;color:#4a4a5c;transform:scaleX(0.9964);transform-origin:0 0;">Type and dimensions</div>
<div class="t" style="left:1084.50px;top:749.34px;font-size:12px;color:#4a4a5c;transform:scaleX(0.9656);transform-origin:0 0;">Elastic bearing</div>
<div class="t" style="left:1330.75px;top:749.34px;font-size:12px;color:#4a4a5c;transform:scaleX(1.0120);transform-origin:0 0;">Settlement of supports</div>
<div class="t" style="left:378.10px;top:770.57px;font-size:11.5px;transform:scaleX(1.0027);transform-origin:0 0;">Type</div>
<div class="t" style="left:470.10px;top:770.57px;font-size:11.5px;transform:scaleX(0.9865);transform-origin:0 0;">Width</div>
<div class="t" style="left:554.75px;top:770.57px;font-size:11.5px;transform:scaleX(0.9613);transform-origin:0 0;">Depth</div>
<div class="t" style="left:640.00px;top:770.57px;font-size:11.5px;transform:scaleX(1.0301);transform-origin:0 0;">Kc90</div>
<div class="t" style="left:718.00px;top:770.57px;font-size:11.5px;transform:scaleX(0.9892);transform-origin:0 0;">Verst. links</div>
<div class="t" style="left:819.00px;top:770.57px;font-size:11.5px;transform:scaleX(0.9917);transform-origin:0 0;">Holzkern</div>
<div class="t" style="left:908.50px;top:770.57px;font-size:11.5px;transform:scaleX(0.9857);transform-origin:0 0;">Verst. rechts</div>
<div class="t" style="left:1031.00px;top:770.57px;font-size:11.5px;transform:scaleX(0.9249);transform-origin:0 0;">Cz</div>
<div class="t" style="left:1114.75px;top:770.57px;font-size:11.5px;transform:scaleX(1.0058);transform-origin:0 0;">Phiy</div>
<div class="t" style="left:1186.50px;top:770.57px;font-size:11.5px;transform:scaleX(1.0012);transform-origin:0 0;">Calculate</div>
<div class="t" style="left:1286.25px;top:770.57px;font-size:11.5px;transform:scaleX(1.0620);transform-origin:0 0;">fz</div>
<div class="t" style="left:1417.50px;top:770.57px;font-size:11.5px;transform:scaleX(0.9699);transform-origin:0 0;">Action</div>
<div class="t" style="left:475.10px;top:791.99px;font-size:11px;color:#5a5a5a;transform:scaleX(1.0108);transform-origin:0 0;">[cm]</div>
<div class="t" style="left:559.00px;top:791.99px;font-size:11px;color:#5a5a5a;transform:scaleX(1.0108);transform-origin:0 0;">[cm]</div>
<div class="t" style="left:1022.00px;top:791.99px;font-size:11px;color:#5a5a5a;transform:scaleX(1.0071);transform-origin:0 0;">[kN/m]</div>
<div class="t" style="left:1101.50px;top:791.99px;font-size:11px;color:#5a5a5a;transform:scaleX(1.0278);transform-origin:0 0;">[kNm/rad]</div>
<div class="t" style="left:1177.75px;top:791.99px;font-size:11px;color:#5a5a5a;transform:scaleX(1.0260);transform-origin:0 0;">spring values</div>
<div class="t" style="left:1280.00px;top:791.99px;font-size:11px;color:#5a5a5a;transform:scaleX(1.0108);transform-origin:0 0;">[cm]</div>
<svg width="38" height="14" style="left:726.5px;top:790px"><rect x="0.8" y="0.8" width="12" height="12" rx="2.2" fill="#fff" stroke="#a6a6a6" stroke-width="1.1"/><path d="M3.5 6.8l2.4 2.5l4.1-5.2" stroke="#8c8c8c" stroke-width="1.3" fill="none"/><rect x="17.2" y="0.8" width="2.6" height="12.4" fill="#b6aeae"/><rect x="24.4" y="0.8" width="12" height="12" rx="2.2" fill="#fff" stroke="#a6a6a6" stroke-width="1.1"/></svg>
<svg width="38" height="14" style="left:822.5px;top:790px"><rect x="0.8" y="0.8" width="12" height="12" rx="2.2" fill="#fff" stroke="#a6a6a6" stroke-width="1.1"/><path d="M3.5 6.8l2.4 2.5l4.1-5.2" stroke="#8c8c8c" stroke-width="1.3" fill="none"/><rect x="17.2" y="0.8" width="2.6" height="12.4" fill="#b6aeae"/><rect x="24.4" y="0.8" width="12" height="12" rx="2.2" fill="#fff" stroke="#a6a6a6" stroke-width="1.1"/></svg>
<svg width="38" height="14" style="left:921px;top:790px"><rect x="0.8" y="0.8" width="12" height="12" rx="2.2" fill="#fff" stroke="#a6a6a6" stroke-width="1.1"/><path d="M3.5 6.8l2.4 2.5l4.1-5.2" stroke="#8c8c8c" stroke-width="1.3" fill="none"/><rect x="17.2" y="0.8" width="2.6" height="12.4" fill="#b6aeae"/><rect x="24.4" y="0.8" width="12" height="12" rx="2.2" fill="#fff" stroke="#a6a6a6" stroke-width="1.1"/></svg>
<div class="t" style="left:326.44px;top:813.99px;font-size:11px;color:#5a5a5a;">1</div>
<div class="t" style="left:342.00px;top:813.57px;font-size:11.5px;transform:scaleX(0.9778);transform-origin:0 0;">Direct bearing</div>
<div class="t" style="left:502.59px;top:813.99px;font-size:11px;">24.0</div>
<div class="t" style="left:586.59px;top:813.99px;font-size:11px;">10.0</div>
<div class="t" style="left:670.59px;top:813.99px;font-size:11px;">1.50</div>
<svg width="14" height="14" style="left:739px;top:812px"><rect x="0.5" y="0.5" width="12" height="12" fill="#fff" stroke="#333"/></svg>
<svg width="14" height="14" style="left:834px;top:812px"><rect x="0.5" y="0.5" width="12" height="12" fill="#fff" stroke="#333"/><path d="M2.8 6.6l2.7 2.8l4.9-6" stroke="#222" stroke-width="1.25" fill="none"/></svg>
<svg width="14" height="14" style="left:933.5px;top:812px"><rect x="0.5" y="0.5" width="12" height="12" fill="#fff" stroke="#333"/></svg>
<div class="t" style="left:1040.70px;top:813.57px;font-size:11.5px;transform:scaleX(0.8421);transform-origin:0 0;">rigid</div>
<svg width="14" height="14" style="left:1063.5px;top:811px"><rect x="0.5" y="0.5" width="12" height="12" fill="#fff" stroke="#333"/><path d="M2.8 6.6l2.7 2.8l4.9-6" stroke="#222" stroke-width="1.25" fill="none"/></svg>
<div class="t" style="left:1138.01px;top:813.99px;font-size:11px;">0.0</div>
<svg width="14" height="14" style="left:1156.3px;top:811px"><rect x="0.5" y="0.5" width="12" height="12" fill="#fff" stroke="#333"/></svg>
<svg width="27" height="20" style="left:1222px;top:809px"><rect x="0.5" y="0.5" width="25.5" height="18" fill="#e9e9e9" stroke="#c2c2c2"/><rect x="3" y="3" width="20.5" height="13" fill="#fbd96a"/><rect x="6.2" y="5.4" width="11.6" height="10.2" fill="#fff" stroke="#4a6cb8" stroke-width="0.9"/><rect x="6.6" y="5.8" width="10.8" height="2.6" fill="#5c8ce0"/><path d="M8 10.6h3M8 12.4h3M8 14h3M12 13.4h4.4" stroke="#8fa4cc" stroke-width="0.9"/><path d="M11.6 13.2l7.2-7.4l2.1 2l-7.2 7.4l-2.9 0.9z" fill="#f0d050" stroke="#8a6a18" stroke-width="0.6"/><path d="M18.8 5.8l1.2-1.2l2.1 2l-1.2 1.2z" fill="#e08070"/><path d="M11.6 13.2l-0.8 2.9l2.9-0.9z" fill="#333"/></svg>
<div class="t" style="left:1313.71px;top:813.99px;font-size:11px;">0.0</div>
<div class="t" style="left:1336.30px;top:813.99px;font-size:11px;color:#666;transform:scaleX(0.9848);transform-origin:0 0;">Settlements</div>
<div class="t" style="left:326.44px;top:834.99px;font-size:11px;color:#5a5a5a;">2</div>
<div class="t" style="left:342.00px;top:834.57px;font-size:11.5px;transform:scaleX(0.9778);transform-origin:0 0;">Direct bearing</div>
<div class="t" style="left:502.59px;top:834.99px;font-size:11px;">24.0</div>
<div class="t" style="left:586.59px;top:834.99px;font-size:11px;">10.0</div>
<div class="t" style="left:670.59px;top:834.99px;font-size:11px;">1.50</div>
<svg width="14" height="14" style="left:739px;top:833px"><rect x="0.5" y="0.5" width="12" height="12" fill="#fff" stroke="#333"/><path d="M2.8 6.6l2.7 2.8l4.9-6" stroke="#222" stroke-width="1.25" fill="none"/></svg>
<svg width="14" height="14" style="left:834px;top:833px"><rect x="0.5" y="0.5" width="12" height="12" fill="#fff" stroke="#333"/></svg>
<svg width="14" height="14" style="left:933.5px;top:833px"><rect x="0.5" y="0.5" width="12" height="12" fill="#fff" stroke="#333"/><path d="M2.8 6.6l2.7 2.8l4.9-6" stroke="#222" stroke-width="1.25" fill="none"/></svg>
<div class="t" style="left:1040.70px;top:834.57px;font-size:11.5px;transform:scaleX(0.8421);transform-origin:0 0;">rigid</div>
<svg width="14" height="14" style="left:1063.5px;top:832px"><rect x="0.5" y="0.5" width="12" height="12" fill="#fff" stroke="#333"/><path d="M2.8 6.6l2.7 2.8l4.9-6" stroke="#222" stroke-width="1.25" fill="none"/></svg>
<div class="t" style="left:1138.01px;top:834.99px;font-size:11px;">0.0</div>
<svg width="14" height="14" style="left:1156.3px;top:832px"><rect x="0.5" y="0.5" width="12" height="12" fill="#fff" stroke="#333"/></svg>
<svg width="27" height="20" style="left:1222px;top:830px"><rect x="0.5" y="0.5" width="25.5" height="18" fill="#e9e9e9" stroke="#c2c2c2"/><rect x="3" y="3" width="20.5" height="13" fill="#f0f0f0"/><rect x="6.2" y="5.4" width="11.6" height="10.2" fill="#fff" stroke="#4a6cb8" stroke-width="0.9"/><rect x="6.6" y="5.8" width="10.8" height="2.6" fill="#5c8ce0"/><path d="M8 10.6h3M8 12.4h3M8 14h3M12 13.4h4.4" stroke="#8fa4cc" stroke-width="0.9"/><path d="M11.6 13.2l7.2-7.4l2.1 2l-7.2 7.4l-2.9 0.9z" fill="#f0d050" stroke="#8a6a18" stroke-width="0.6"/><path d="M18.8 5.8l1.2-1.2l2.1 2l-1.2 1.2z" fill="#e08070"/><path d="M11.6 13.2l-0.8 2.9l2.9-0.9z" fill="#333"/></svg>
<div class="t" style="left:1313.71px;top:834.99px;font-size:11px;">0.0</div>
<div class="t" style="left:1336.30px;top:834.99px;font-size:11px;color:#666;transform:scaleX(0.9848);transform-origin:0 0;">Settlements</div>
<div class="t" style="left:326.44px;top:855.99px;font-size:11px;color:#5a5a5a;">3</div>
<div class="t" style="left:342.00px;top:855.57px;font-size:11.5px;transform:scaleX(0.9778);transform-origin:0 0;">Direct bearing</div>
<div class="t" style="left:502.59px;top:855.99px;font-size:11px;">24.0</div>
<div class="t" style="left:586.59px;top:855.99px;font-size:11px;">10.0</div>
<div class="t" style="left:670.59px;top:855.99px;font-size:11px;">1.50</div>
<svg width="14" height="14" style="left:739px;top:854px"><rect x="0.5" y="0.5" width="12" height="12" fill="#fff" stroke="#333"/></svg>
<svg width="14" height="14" style="left:834px;top:854px"><rect x="0.5" y="0.5" width="12" height="12" fill="#fff" stroke="#333"/><path d="M2.8 6.6l2.7 2.8l4.9-6" stroke="#222" stroke-width="1.25" fill="none"/></svg>
<svg width="14" height="14" style="left:933.5px;top:854px"><rect x="0.5" y="0.5" width="12" height="12" fill="#fff" stroke="#333"/></svg>
<div class="t" style="left:1040.70px;top:855.57px;font-size:11.5px;transform:scaleX(0.8421);transform-origin:0 0;">rigid</div>
<svg width="14" height="14" style="left:1063.5px;top:853px"><rect x="0.5" y="0.5" width="12" height="12" fill="#fff" stroke="#333"/><path d="M2.8 6.6l2.7 2.8l4.9-6" stroke="#222" stroke-width="1.25" fill="none"/></svg>
<div class="t" style="left:1138.01px;top:855.99px;font-size:11px;">0.0</div>
<svg width="14" height="14" style="left:1156.3px;top:853px"><rect x="0.5" y="0.5" width="12" height="12" fill="#fff" stroke="#333"/></svg>
<svg width="27" height="20" style="left:1222px;top:851px"><rect x="0.5" y="0.5" width="25.5" height="18" fill="#e9e9e9" stroke="#c2c2c2"/><rect x="3" y="3" width="20.5" height="13" fill="#f0f0f0"/><rect x="6.2" y="5.4" width="11.6" height="10.2" fill="#fff" stroke="#4a6cb8" stroke-width="0.9"/><rect x="6.6" y="5.8" width="10.8" height="2.6" fill="#5c8ce0"/><path d="M8 10.6h3M8 12.4h3M8 14h3M12 13.4h4.4" stroke="#8fa4cc" stroke-width="0.9"/><path d="M11.6 13.2l7.2-7.4l2.1 2l-7.2 7.4l-2.9 0.9z" fill="#f0d050" stroke="#8a6a18" stroke-width="0.6"/><path d="M18.8 5.8l1.2-1.2l2.1 2l-1.2 1.2z" fill="#e08070"/><path d="M11.6 13.2l-0.8 2.9l2.9-0.9z" fill="#333"/></svg>
<div class="t" style="left:1313.71px;top:855.99px;font-size:11px;">0.0</div>
<div class="t" style="left:1336.30px;top:855.99px;font-size:11px;color:#666;transform:scaleX(0.9848);transform-origin:0 0;">Settlements</div>
<svg width="28" height="28" style="left:1569px;top:743.5px"><rect x="0.5" y="0.5" width="26.5" height="26.5" fill="#ececec" stroke="#c2c2c2"/><rect x="8" y="8.5" width="11" height="12.5" rx="1" fill="#dfe7f5" stroke="#6b84b8"/><rect x="11" y="6.6" width="5" height="3.4" rx="1" fill="#c9a24a" stroke="#8a6a20" stroke-width="0.7"/><path d="M9.8 15.4l2.6 3.2l6-7.6" stroke="#e03020" stroke-width="1.8" fill="none"/></svg>
<div class="abs" style="left:0;top:878px;width:1600px;height:22px;background:#f3f2f1;border-top:1px solid #d9d9d9"></div>
</body></html>
